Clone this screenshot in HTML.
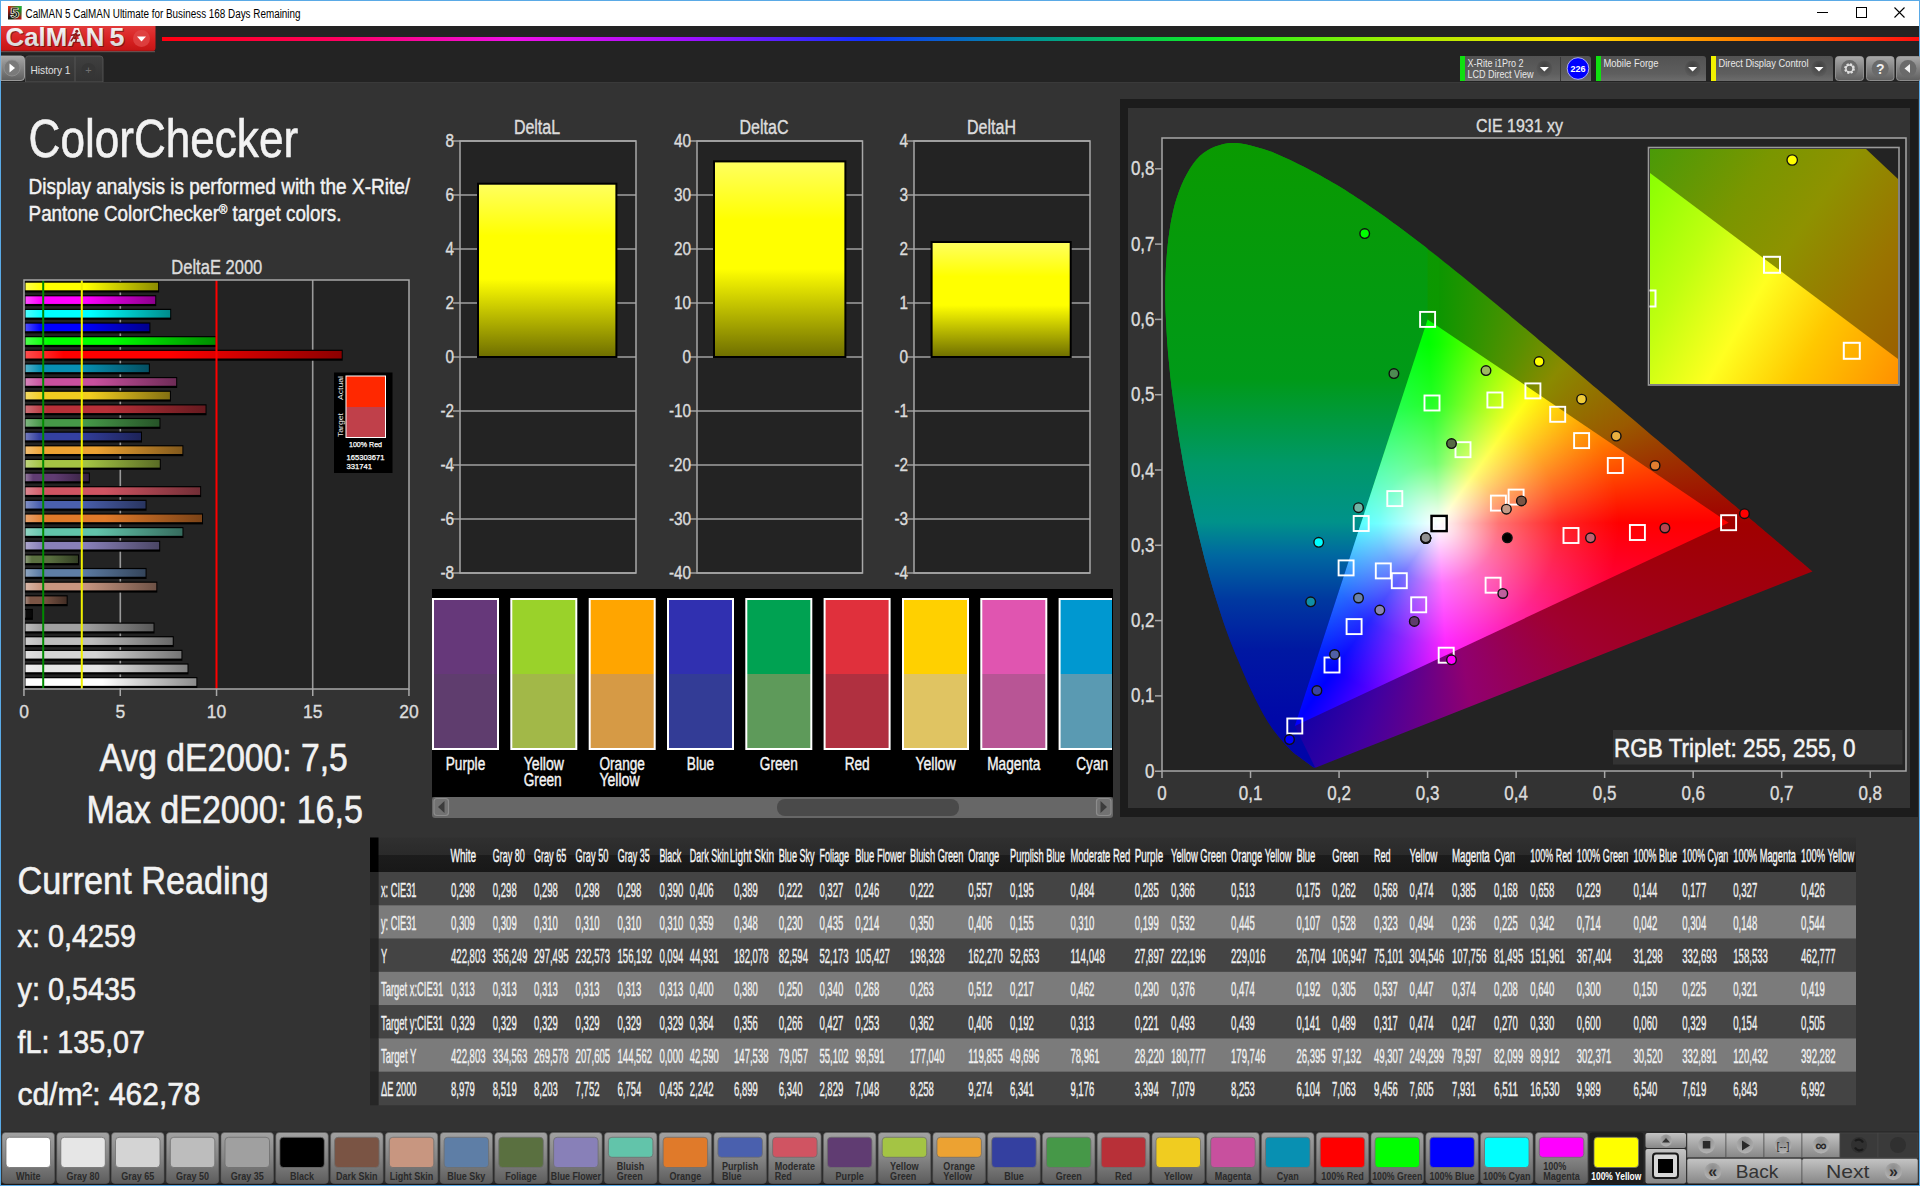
<!DOCTYPE html>
<html><head><meta charset="utf-8"><title>CalMAN ColorChecker</title>
<style>
html,body{margin:0;padding:0;width:1920px;height:1186px;overflow:hidden;background:#333;}
body{position:relative;font-family:"Liberation Sans", sans-serif;}
svg{position:absolute;left:0;top:0;}
svg text{font-family:"Liberation Sans", sans-serif;}
</style></head><body>
<svg width="1920" height="1186" viewBox="0 0 1920 1186">
<rect x="0" y="0" width="1920" height="1186" fill="#5aaae6"/>
<rect x="1" y="1" width="1918" height="25" fill="#ffffff"/>
<defs><linearGradient id="icg" x1="0" y1="0" x2="1" y2="1"><stop offset="0" stop-color="#e03020"/><stop offset="0.5" stop-color="#202020"/><stop offset="1" stop-color="#c02020"/></linearGradient></defs>
<defs><linearGradient id="icr" x1="0" y1="0" x2="1" y2="1"><stop offset="0" stop-color="#ff3010"/><stop offset="0.45" stop-color="#301010"/><stop offset="0.6" stop-color="#103010"/><stop offset="1" stop-color="#e01020"/></linearGradient><linearGradient id="icg2" x1="1" y1="0" x2="0" y2="1"><stop offset="0" stop-color="#20e040" stop-opacity="0.9"/><stop offset="0.5" stop-color="#20e040" stop-opacity="0"/></linearGradient></defs>
<rect x="8" y="6" width="13.5" height="13.5" fill="url(#icr)"/>
<rect x="8" y="6" width="13.5" height="13.5" fill="url(#icg2)"/>
<text x="10.3" y="18" font-size="14" font-weight="bold" fill="#000" stroke="#f0f0e0" stroke-width="0.7" textLength="9" lengthAdjust="spacingAndGlyphs">5</text>
<text x="25.50" y="17.50" font-size="12.00" fill="#000" textLength="275.00" lengthAdjust="spacingAndGlyphs" >CalMAN 5 CalMAN Ultimate for Business 168 Days Remaining</text>
<rect x="1817" y="12" width="11" height="1" fill="#000"/>
<rect x="1856.5" y="7.5" width="10" height="10" fill="none" stroke="#000" stroke-width="1"/>
<path d="M1894.5 7.5 L1904.5 17.5 M1904.5 7.5 L1894.5 17.5" stroke="#000" stroke-width="1.1"/>
<rect x="1" y="26" width="1918" height="56" fill="#232323"/>
<defs><linearGradient id="logog" x1="0" y1="0" x2="0" y2="1"><stop offset="0" stop-color="#e23a3a"/><stop offset="0.5" stop-color="#d82222"/><stop offset="1" stop-color="#c41414"/></linearGradient><linearGradient id="logot" x1="0" y1="0" x2="0" y2="1"><stop offset="0" stop-color="#ffffff"/><stop offset="1" stop-color="#cfcfcf"/></linearGradient></defs>
<path d="M1 26 H155.5 V47.5 Q155.5 51.5 151.5 51.5 H1 Z" fill="url(#logog)"/>
<rect x="1" y="50.5" width="154" height="1.2" fill="#7a1010" opacity="0.6"/>
<text x="6.50" y="46.50" font-size="26.50" fill="#3a0a0a" textLength="99.00" lengthAdjust="spacingAndGlyphs" font-weight="bold" opacity="0.5">CalMAN</text>
<text x="5.50" y="45.50" font-size="26.50" fill="url(#logot)" textLength="99.00" lengthAdjust="spacingAndGlyphs" font-weight="bold" >CalMAN</text>
<text x="110.50" y="46.50" font-size="26.50" fill="#3a0a0a" textLength="15.00" lengthAdjust="spacingAndGlyphs" font-weight="bold" opacity="0.5">5</text>
<text x="109.50" y="45.50" font-size="26.50" fill="url(#logot)" textLength="15.00" lengthAdjust="spacingAndGlyphs" font-weight="bold" >5</text>
<g fill="none" stroke="#901818" stroke-width="1.6" stroke-linecap="round" stroke-linejoin="round"><circle cx="76.8" cy="31.2" r="1.5" fill="#901818" stroke="none"/><path d="M75.5 33.5 L73.5 37.5 M75 34.3 L77.8 35.8 L79.5 34.8 M74.6 34.5 L71.6 35.2 M73.5 37.5 L76.3 39.2 L75.8 41.8 M73.5 37.5 L71.2 40.8"/></g>
<rect x="1" y="51.2" width="154" height="1" fill="#6a6a6a" opacity="0.8"/>
<circle cx="141.5" cy="38.5" r="8.5" fill="#e04646" opacity="0.8"/>
<path d="M137 36.5 H146 L141.5 41.5 Z" fill="#fff"/>
<defs><linearGradient id="rainbow" x1="0" y1="0" x2="1" y2="0"><stop offset="0" stop-color="#ff0010"/><stop offset="0.1" stop-color="#ff0060"/><stop offset="0.2" stop-color="#f010e8"/><stop offset="0.3" stop-color="#a010ff"/><stop offset="0.4" stop-color="#1030ff"/><stop offset="0.5" stop-color="#009a90"/><stop offset="0.6" stop-color="#10f020"/><stop offset="0.7" stop-color="#a0f000"/><stop offset="0.8" stop-color="#ffe000"/><stop offset="0.9" stop-color="#ff8000"/><stop offset="1" stop-color="#ff1010"/></linearGradient></defs>
<rect x="162" y="37" width="1757" height="4" fill="url(#rainbow)"/>
<defs><linearGradient id="btng" x1="0" y1="0" x2="0" y2="1"><stop offset="0" stop-color="#a8a8a8"/><stop offset="1" stop-color="#5e5e5e"/></linearGradient><linearGradient id="tabg" x1="0" y1="0" x2="0" y2="1"><stop offset="0" stop-color="#404040"/><stop offset="1" stop-color="#333333"/></linearGradient><linearGradient id="devg" x1="0" y1="0" x2="0" y2="1"><stop offset="0" stop-color="#525252"/><stop offset="0.7" stop-color="#5e5e5e"/><stop offset="1" stop-color="#6c6c6c"/></linearGradient><radialGradient id="ddg" cx="0.5" cy="0.35" r="0.6"><stop offset="0" stop-color="#3e3e3e"/><stop offset="1" stop-color="#5a5a5a"/></radialGradient></defs>
<path d="M1 56 H21 Q24.5 56 24.5 59.5 V77 Q24.5 80.5 21 80.5 H1 Z" fill="url(#btng)" stroke="#b0b0b0" stroke-width="0.8"/>
<circle cx="12" cy="68" r="8" fill="#7a7a7a" stroke="#909090" stroke-width="0.8"/>
<path d="M9.5 63.5 L15 68 L9.5 72.5 Z" fill="#fff"/>
<path d="M25.5 82 V59 Q25.5 56 28.5 56 H100 Q103 56 103 59 V82 Z" fill="url(#tabg)" stroke="#5a5a5a" stroke-width="0.8"/>
<rect x="74.5" y="56.5" width="1" height="25" fill="#555"/>
<text x="30.50" y="73.50" font-size="11.00" fill="#e0e0e0" textLength="40.00" lengthAdjust="spacingAndGlyphs" >History 1</text>
<circle cx="88.5" cy="70" r="7" fill="#363636"/>
<text x="88.50" y="74.00" font-size="11.00" fill="#707070" text-anchor="middle" >+</text>
<path d="M1460.0 56 H1588.0 Q1591.0 56 1591.0 59 V81 H1460.0 Z" fill="url(#devg)"/><rect x="1460.0" y="56" width="5" height="25" fill="#10e010"/><text x="1467.50" y="66.50" font-size="10.50" fill="#e8e8e8" textLength="56.00" lengthAdjust="spacingAndGlyphs" >X-Rite i1Pro 2</text><text x="1467.50" y="78.00" font-size="10.50" fill="#e8e8e8" textLength="66.00" lengthAdjust="spacingAndGlyphs" >LCD Direct View</text><circle cx="1544.4" cy="68.5" r="8" fill="url(#ddg)"/><path d="M1539.9 67 H1548.9 L1544.4 71.5 Z" fill="#fff"/>
<rect x="1560" y="57" width="1" height="24" fill="#3a3a3a"/>
<circle cx="1578" cy="68.5" r="10.8" fill="#0000ff" stroke="#d0d0ff" stroke-width="0.8"/>
<text x="1578.00" y="72.00" font-size="9.00" fill="#fff" text-anchor="middle" font-weight="bold" >226</text>
<path d="M1596.0 56 H1703.0 Q1706.0 56 1706.0 59 V81 H1596.0 Z" fill="url(#devg)"/><rect x="1596.0" y="56" width="5" height="25" fill="#10e010"/><text x="1603.50" y="66.50" font-size="10.50" fill="#e8e8e8" textLength="55.00" lengthAdjust="spacingAndGlyphs" >Mobile Forge</text><circle cx="1692.6" cy="68.5" r="8" fill="url(#ddg)"/><path d="M1688.1 67 H1697.1 L1692.6 71.5 Z" fill="#fff"/>
<path d="M1711.0 56 H1830.0 Q1833.0 56 1833.0 59 V81 H1711.0 Z" fill="url(#devg)"/><rect x="1711.0" y="56" width="5" height="25" fill="#f0f000"/><text x="1718.50" y="66.50" font-size="10.50" fill="#e8e8e8" textLength="90.00" lengthAdjust="spacingAndGlyphs" >Direct Display Control</text><circle cx="1819.0" cy="68.5" r="8" fill="url(#ddg)"/><path d="M1814.5 67 H1823.5 L1819.0 71.5 Z" fill="#fff"/>
<rect x="1835.5" y="56.5" width="28.0" height="24" rx="3" fill="url(#btng)" stroke="#a0a0a0" stroke-width="0.8"/>
<circle cx="1849.5" cy="68.5" r="8.5" fill="#6a6a6a"/>
<circle cx="1849.5" cy="68.5" r="4.2" fill="none" stroke="#e0e0e0" stroke-width="2.4" stroke-dasharray="2 1.3"/>
<circle cx="1849.5" cy="68.5" r="3.6" fill="none" stroke="#e0e0e0" stroke-width="1.5"/>
<rect x="1866.5" y="56.5" width="27.5" height="24" rx="3" fill="url(#btng)" stroke="#a0a0a0" stroke-width="0.8"/>
<circle cx="1880.2" cy="68.5" r="8.5" fill="#6a6a6a"/>
<text x="1880.25" y="74.00" font-size="14.00" fill="#f0f0f0" text-anchor="middle" font-weight="bold" >?</text>
<rect x="1896.5" y="56.5" width="25.0" height="24" rx="3" fill="url(#btng)" stroke="#a0a0a0" stroke-width="0.8"/>
<circle cx="1908.0" cy="68.5" r="8.5" fill="#6a6a6a"/>
<path d="M1904.5 68.5 L1910.0 64 V73 Z" fill="#f0f0f0"/>
<rect x="1" y="82" width="1918" height="1050" fill="#333333"/>
<rect x="1" y="82" width="1918" height="1" fill="#3a3a3a"/>
<defs><linearGradient id="bg0" x1="0" y1="0" x2="1" y2="0"><stop offset="0" stop-color="#ffff4c"/><stop offset="0.12" stop-color="#ffff00"/><stop offset="0.45" stop-color="#ffff00"/><stop offset="1" stop-color="#8c8c00"/></linearGradient><linearGradient id="bg1" x1="0" y1="0" x2="1" y2="0"><stop offset="0" stop-color="#ff4cff"/><stop offset="0.12" stop-color="#ff00ff"/><stop offset="0.45" stop-color="#ff00ff"/><stop offset="1" stop-color="#8c008c"/></linearGradient><linearGradient id="bg2" x1="0" y1="0" x2="1" y2="0"><stop offset="0" stop-color="#4cffff"/><stop offset="0.12" stop-color="#00ffff"/><stop offset="0.45" stop-color="#00ffff"/><stop offset="1" stop-color="#008c8c"/></linearGradient><linearGradient id="bg3" x1="0" y1="0" x2="1" y2="0"><stop offset="0" stop-color="#4c4cff"/><stop offset="0.12" stop-color="#0000ff"/><stop offset="0.45" stop-color="#0000ff"/><stop offset="1" stop-color="#00008c"/></linearGradient><linearGradient id="bg4" x1="0" y1="0" x2="1" y2="0"><stop offset="0" stop-color="#4cff4c"/><stop offset="0.12" stop-color="#00ff00"/><stop offset="0.45" stop-color="#00ff00"/><stop offset="1" stop-color="#008c00"/></linearGradient><linearGradient id="bg5" x1="0" y1="0" x2="1" y2="0"><stop offset="0" stop-color="#ff4c4c"/><stop offset="0.12" stop-color="#ff0000"/><stop offset="0.45" stop-color="#ff0000"/><stop offset="1" stop-color="#8c0000"/></linearGradient><linearGradient id="bg6" x1="0" y1="0" x2="1" y2="0"><stop offset="0" stop-color="#52b1c9"/><stop offset="0.12" stop-color="#0890b2"/><stop offset="0.45" stop-color="#0890b2"/><stop offset="1" stop-color="#044f62"/></linearGradient><linearGradient id="bg7" x1="0" y1="0" x2="1" y2="0"><stop offset="0" stop-color="#d884bb"/><stop offset="0.12" stop-color="#c8509e"/><stop offset="0.45" stop-color="#c8509e"/><stop offset="1" stop-color="#6e2c57"/></linearGradient><linearGradient id="bg8" x1="0" y1="0" x2="1" y2="0"><stop offset="0" stop-color="#f4db63"/><stop offset="0.12" stop-color="#f0cc20"/><stop offset="0.45" stop-color="#f0cc20"/><stop offset="1" stop-color="#847012"/></linearGradient><linearGradient id="bg9" x1="0" y1="0" x2="1" y2="0"><stop offset="0" stop-color="#cd6e74"/><stop offset="0.12" stop-color="#b83038"/><stop offset="0.45" stop-color="#b83038"/><stop offset="1" stop-color="#651a1f"/></linearGradient><linearGradient id="bg10" x1="0" y1="0" x2="1" y2="0"><stop offset="0" stop-color="#7eb77f"/><stop offset="0.12" stop-color="#469848"/><stop offset="0.45" stop-color="#469848"/><stop offset="1" stop-color="#265428"/></linearGradient><linearGradient id="bg11" x1="0" y1="0" x2="1" y2="0"><stop offset="0" stop-color="#7179bc"/><stop offset="0.12" stop-color="#3440a0"/><stop offset="0.45" stop-color="#3440a0"/><stop offset="1" stop-color="#1d2358"/></linearGradient><linearGradient id="bg12" x1="0" y1="0" x2="1" y2="0"><stop offset="0" stop-color="#f2be70"/><stop offset="0.12" stop-color="#eca232"/><stop offset="0.45" stop-color="#eca232"/><stop offset="1" stop-color="#82591c"/></linearGradient><linearGradient id="bg13" x1="0" y1="0" x2="1" y2="0"><stop offset="0" stop-color="#bfd67c"/><stop offset="0.12" stop-color="#a4c444"/><stop offset="0.45" stop-color="#a4c444"/><stop offset="1" stop-color="#5a6c25"/></linearGradient><linearGradient id="bg14" x1="0" y1="0" x2="1" y2="0"><stop offset="0" stop-color="#90769c"/><stop offset="0.12" stop-color="#603c72"/><stop offset="0.45" stop-color="#603c72"/><stop offset="1" stop-color="#35213f"/></linearGradient><linearGradient id="bg15" x1="0" y1="0" x2="1" y2="0"><stop offset="0" stop-color="#de8791"/><stop offset="0.12" stop-color="#d05462"/><stop offset="0.45" stop-color="#d05462"/><stop offset="1" stop-color="#722e36"/></linearGradient><linearGradient id="bg16" x1="0" y1="0" x2="1" y2="0"><stop offset="0" stop-color="#8090c6"/><stop offset="0.12" stop-color="#4a60ae"/><stop offset="0.45" stop-color="#4a60ae"/><stop offset="1" stop-color="#293560"/></linearGradient><linearGradient id="bg17" x1="0" y1="0" x2="1" y2="0"><stop offset="0" stop-color="#e9a26a"/><stop offset="0.12" stop-color="#e07a2a"/><stop offset="0.45" stop-color="#e07a2a"/><stop offset="1" stop-color="#7b4317"/></linearGradient><linearGradient id="bg18" x1="0" y1="0" x2="1" y2="0"><stop offset="0" stop-color="#91d6c4"/><stop offset="0.12" stop-color="#62c4aa"/><stop offset="0.45" stop-color="#62c4aa"/><stop offset="1" stop-color="#366c5e"/></linearGradient><linearGradient id="bg19" x1="0" y1="0" x2="1" y2="0"><stop offset="0" stop-color="#aca6cd"/><stop offset="0.12" stop-color="#8880b8"/><stop offset="0.45" stop-color="#8880b8"/><stop offset="1" stop-color="#4b4665"/></linearGradient><linearGradient id="bg20" x1="0" y1="0" x2="1" y2="0"><stop offset="0" stop-color="#8c9b79"/><stop offset="0.12" stop-color="#5a7040"/><stop offset="0.45" stop-color="#5a7040"/><stop offset="1" stop-color="#323e23"/></linearGradient><linearGradient id="bg21" x1="0" y1="0" x2="1" y2="0"><stop offset="0" stop-color="#8ea5c1"/><stop offset="0.12" stop-color="#5e7ea6"/><stop offset="0.45" stop-color="#5e7ea6"/><stop offset="1" stop-color="#34455b"/></linearGradient><linearGradient id="bg22" x1="0" y1="0" x2="1" y2="0"><stop offset="0" stop-color="#d8b6a6"/><stop offset="0.12" stop-color="#c89680"/><stop offset="0.45" stop-color="#c89680"/><stop offset="1" stop-color="#6e5246"/></linearGradient><linearGradient id="bg23" x1="0" y1="0" x2="1" y2="0"><stop offset="0" stop-color="#a2877c"/><stop offset="0.12" stop-color="#7a5444"/><stop offset="0.45" stop-color="#7a5444"/><stop offset="1" stop-color="#432e25"/></linearGradient><linearGradient id="bg24" x1="0" y1="0" x2="1" y2="0"><stop offset="0" stop-color="#545454"/><stop offset="0.12" stop-color="#0a0a0a"/><stop offset="0.45" stop-color="#0a0a0a"/><stop offset="1" stop-color="#060606"/></linearGradient><linearGradient id="bg25" x1="0" y1="0" x2="1" y2="0"><stop offset="0" stop-color="#bcbcbc"/><stop offset="0.12" stop-color="#a0a0a0"/><stop offset="0.45" stop-color="#a0a0a0"/><stop offset="1" stop-color="#585858"/></linearGradient><linearGradient id="bg26" x1="0" y1="0" x2="1" y2="0"><stop offset="0" stop-color="#d1d1d1"/><stop offset="0.12" stop-color="#bdbdbd"/><stop offset="0.45" stop-color="#bdbdbd"/><stop offset="1" stop-color="#686868"/></linearGradient><linearGradient id="bg27" x1="0" y1="0" x2="1" y2="0"><stop offset="0" stop-color="#e1e1e1"/><stop offset="0.12" stop-color="#d4d4d4"/><stop offset="0.45" stop-color="#d4d4d4"/><stop offset="1" stop-color="#757575"/></linearGradient><linearGradient id="bg28" x1="0" y1="0" x2="1" y2="0"><stop offset="0" stop-color="#eeeeee"/><stop offset="0.12" stop-color="#e6e6e6"/><stop offset="0.45" stop-color="#e6e6e6"/><stop offset="1" stop-color="#7f7f7f"/></linearGradient><linearGradient id="bg29" x1="0" y1="0" x2="1" y2="0"><stop offset="0" stop-color="#ffffff"/><stop offset="0.12" stop-color="#ffffff"/><stop offset="0.45" stop-color="#ffffff"/><stop offset="1" stop-color="#8c8c8c"/></linearGradient></defs>
<text x="28.60" y="156.80" font-size="53.00" fill="#f2f2f2" textLength="269.50" lengthAdjust="spacingAndGlyphs" stroke="#f2f2f2" stroke-width="0.6">ColorChecker</text>
<text x="28.60" y="193.50" font-size="21.50" fill="#f2f2f2" textLength="381.50" lengthAdjust="spacingAndGlyphs" stroke="#f2f2f2" stroke-width="0.45">Display analysis is performed with the X-Rite/</text>
<text x="28.6" y="221" font-size="21.5" fill="#f2f2f2" stroke="#f2f2f2" stroke-width="0.45" textLength="312.8" lengthAdjust="spacingAndGlyphs">Pantone ColorChecker<tspan font-size="13" dy="-7">®</tspan><tspan dy="7"> target colors.</tspan></text>
<text x="216.80" y="273.70" font-size="19.50" fill="#dcdcdc" text-anchor="middle" textLength="91.00" lengthAdjust="spacingAndGlyphs" stroke="#dcdcdc" stroke-width="0.4">DeltaE 2000</text>
<rect x="24" y="280" width="385" height="409" fill="#232323"/>
<rect x="119.5" y="280" width="1.6" height="409" fill="#9a9a9a"/>
<rect x="311.9" y="280" width="1.6" height="409" fill="#9a9a9a"/>
<rect x="24.5" y="281.50" width="134.60" height="11" fill="#000"/>
<rect x="25.5" y="282.70" width="132.60" height="7.6" fill="url(#bg0)"/>
<rect x="24.5" y="295.14" width="131.73" height="11" fill="#000"/>
<rect x="25.5" y="296.34" width="129.73" height="7.6" fill="url(#bg1)"/>
<rect x="24.5" y="308.78" width="146.67" height="11" fill="#000"/>
<rect x="25.5" y="309.98" width="144.67" height="7.6" fill="url(#bg2)"/>
<rect x="24.5" y="322.42" width="125.89" height="11" fill="#000"/>
<rect x="25.5" y="323.62" width="123.89" height="7.6" fill="url(#bg3)"/>
<rect x="24.5" y="336.06" width="192.29" height="11" fill="#000"/>
<rect x="25.5" y="337.26" width="190.29" height="7.6" fill="url(#bg4)"/>
<rect x="24.5" y="349.70" width="318.20" height="11" fill="#000"/>
<rect x="25.5" y="350.90" width="316.20" height="7.6" fill="url(#bg5)"/>
<rect x="24.5" y="363.34" width="125.34" height="11" fill="#000"/>
<rect x="25.5" y="364.54" width="123.34" height="7.6" fill="url(#bg6)"/>
<rect x="24.5" y="376.98" width="152.67" height="11" fill="#000"/>
<rect x="25.5" y="378.18" width="150.67" height="7.6" fill="url(#bg7)"/>
<rect x="24.5" y="390.62" width="146.40" height="11" fill="#000"/>
<rect x="25.5" y="391.82" width="144.40" height="7.6" fill="url(#bg8)"/>
<rect x="24.5" y="404.26" width="182.03" height="11" fill="#000"/>
<rect x="25.5" y="405.46" width="180.03" height="7.6" fill="url(#bg9)"/>
<rect x="24.5" y="417.90" width="135.96" height="11" fill="#000"/>
<rect x="25.5" y="419.10" width="133.96" height="7.6" fill="url(#bg10)"/>
<rect x="24.5" y="431.54" width="117.50" height="11" fill="#000"/>
<rect x="25.5" y="432.74" width="115.50" height="7.6" fill="url(#bg11)"/>
<rect x="24.5" y="445.18" width="158.87" height="11" fill="#000"/>
<rect x="25.5" y="446.38" width="156.87" height="7.6" fill="url(#bg12)"/>
<rect x="24.5" y="458.82" width="136.27" height="11" fill="#000"/>
<rect x="25.5" y="460.02" width="134.27" height="7.6" fill="url(#bg13)"/>
<rect x="24.5" y="472.46" width="65.33" height="11" fill="#000"/>
<rect x="25.5" y="473.66" width="63.33" height="7.6" fill="url(#bg14)"/>
<rect x="24.5" y="486.10" width="176.64" height="11" fill="#000"/>
<rect x="25.5" y="487.30" width="174.64" height="7.6" fill="url(#bg15)"/>
<rect x="24.5" y="499.74" width="122.06" height="11" fill="#000"/>
<rect x="25.5" y="500.94" width="120.06" height="7.6" fill="url(#bg16)"/>
<rect x="24.5" y="513.38" width="178.52" height="11" fill="#000"/>
<rect x="25.5" y="514.58" width="176.52" height="7.6" fill="url(#bg17)"/>
<rect x="24.5" y="527.02" width="158.97" height="11" fill="#000"/>
<rect x="25.5" y="528.22" width="156.97" height="7.6" fill="url(#bg18)"/>
<rect x="24.5" y="540.66" width="135.67" height="11" fill="#000"/>
<rect x="25.5" y="541.86" width="133.67" height="7.6" fill="url(#bg19)"/>
<rect x="24.5" y="554.30" width="54.46" height="11" fill="#000"/>
<rect x="25.5" y="555.50" width="52.46" height="7.6" fill="url(#bg20)"/>
<rect x="24.5" y="567.94" width="122.05" height="11" fill="#000"/>
<rect x="25.5" y="569.14" width="120.05" height="7.6" fill="url(#bg21)"/>
<rect x="24.5" y="581.58" width="132.81" height="11" fill="#000"/>
<rect x="25.5" y="582.78" width="130.81" height="7.6" fill="url(#bg22)"/>
<rect x="24.5" y="595.22" width="43.16" height="11" fill="#000"/>
<rect x="25.5" y="596.42" width="41.16" height="7.6" fill="url(#bg23)"/>
<rect x="24.5" y="608.86" width="8.37" height="11" fill="#000"/>
<rect x="25.5" y="610.06" width="6.37" height="7.6" fill="url(#bg24)"/>
<rect x="24.5" y="622.50" width="130.01" height="11" fill="#000"/>
<rect x="25.5" y="623.70" width="128.01" height="7.6" fill="url(#bg25)"/>
<rect x="24.5" y="636.14" width="149.23" height="11" fill="#000"/>
<rect x="25.5" y="637.34" width="147.23" height="7.6" fill="url(#bg26)"/>
<rect x="24.5" y="649.78" width="157.91" height="11" fill="#000"/>
<rect x="25.5" y="650.98" width="155.91" height="7.6" fill="url(#bg27)"/>
<rect x="24.5" y="663.42" width="163.99" height="11" fill="#000"/>
<rect x="25.5" y="664.62" width="161.99" height="7.6" fill="url(#bg28)"/>
<rect x="24.5" y="677.06" width="172.85" height="11" fill="#000"/>
<rect x="25.5" y="678.26" width="170.85" height="7.6" fill="url(#bg29)"/>
<rect x="42.2" y="280" width="2" height="409" fill="#008a00"/>
<rect x="80.8" y="280" width="2" height="409" fill="#f0f000"/>
<rect x="215.5" y="280" width="2" height="409" fill="#ff0000"/>
<rect x="24.0" y="280.0" width="385" height="409" fill="none" stroke="#a8a8a8" stroke-width="1.5"/>
<rect x="23.2" y="689" width="1.5" height="7" fill="#a8a8a8"/>
<text x="24.00" y="717.50" font-size="19.00" fill="#dcdcdc" text-anchor="middle" textLength="9.72" lengthAdjust="spacingAndGlyphs" stroke="#dcdcdc" stroke-width="0.4">0</text>
<rect x="119.5" y="689" width="1.5" height="7" fill="#a8a8a8"/>
<text x="120.25" y="717.50" font-size="19.00" fill="#dcdcdc" text-anchor="middle" textLength="9.72" lengthAdjust="spacingAndGlyphs" stroke="#dcdcdc" stroke-width="0.4">5</text>
<rect x="215.8" y="689" width="1.5" height="7" fill="#a8a8a8"/>
<text x="216.50" y="717.50" font-size="19.00" fill="#dcdcdc" text-anchor="middle" textLength="19.44" lengthAdjust="spacingAndGlyphs" stroke="#dcdcdc" stroke-width="0.4">10</text>
<rect x="312.0" y="689" width="1.5" height="7" fill="#a8a8a8"/>
<text x="312.75" y="717.50" font-size="19.00" fill="#dcdcdc" text-anchor="middle" textLength="19.44" lengthAdjust="spacingAndGlyphs" stroke="#dcdcdc" stroke-width="0.4">15</text>
<rect x="408.2" y="689" width="1.5" height="7" fill="#a8a8a8"/>
<text x="409.00" y="717.50" font-size="19.00" fill="#dcdcdc" text-anchor="middle" textLength="19.44" lengthAdjust="spacingAndGlyphs" stroke="#dcdcdc" stroke-width="0.4">20</text>
<rect x="334" y="372.5" width="58.5" height="100.5" fill="#000"/>
<rect x="345.5" y="375.5" width="40.5" height="62.5" fill="#fff"/>
<rect x="346.5" y="376.5" width="38.5" height="30.5" fill="#ff2800"/>
<rect x="346.5" y="407" width="38.5" height="30" fill="#c0404a"/>
<text transform="translate(342.5 400) rotate(-90)" font-size="8" fill="#e8e8e8" textLength="24" lengthAdjust="spacingAndGlyphs">Actual</text>
<text transform="translate(342.5 437) rotate(-90)" font-size="8" fill="#e8e8e8" textLength="24" lengthAdjust="spacingAndGlyphs">Target</text>
<text x="365.50" y="447.00" font-size="7.50" fill="#ffffff" text-anchor="middle" textLength="33.00" lengthAdjust="spacingAndGlyphs" stroke="#ffffff" stroke-width="0.25">100% Red</text>
<text x="346.50" y="460.00" font-size="7.50" fill="#ffffff" textLength="38.00" lengthAdjust="spacingAndGlyphs" stroke="#ffffff" stroke-width="0.25">165303671</text>
<text x="346.50" y="468.50" font-size="7.50" fill="#ffffff" textLength="25.50" lengthAdjust="spacingAndGlyphs" stroke="#ffffff" stroke-width="0.25">331741</text>
<text x="99.50" y="770.75" font-size="39.00" fill="#f2f2f2" textLength="248.30" lengthAdjust="spacingAndGlyphs" stroke="#f2f2f2" stroke-width="0.6">Avg dE2000: 7,5</text>
<text x="86.40" y="822.80" font-size="39.00" fill="#f2f2f2" textLength="276.60" lengthAdjust="spacingAndGlyphs" stroke="#f2f2f2" stroke-width="0.6">Max dE2000: 16,5</text>
<text x="17.50" y="893.75" font-size="39.00" fill="#f2f2f2" textLength="251.20" lengthAdjust="spacingAndGlyphs" stroke="#f2f2f2" stroke-width="0.6">Current Reading</text>
<text x="17.50" y="947.00" font-size="32.00" fill="#f2f2f2" textLength="118.50" lengthAdjust="spacingAndGlyphs" stroke="#f2f2f2" stroke-width="0.6">x: 0,4259</text>
<text x="17.50" y="1000.00" font-size="32.00" fill="#f2f2f2" textLength="118.50" lengthAdjust="spacingAndGlyphs" stroke="#f2f2f2" stroke-width="0.6">y: 0,5435</text>
<text x="17.50" y="1052.50" font-size="32.00" fill="#f2f2f2" textLength="127.50" lengthAdjust="spacingAndGlyphs" stroke="#f2f2f2" stroke-width="0.6">fL: 135,07</text>
<text x="17.50" y="1105.00" font-size="32.00" fill="#f2f2f2" textLength="183.00" lengthAdjust="spacingAndGlyphs" stroke="#f2f2f2" stroke-width="0.6">cd/m²: 462,78</text>
<defs><linearGradient id="ybar" x1="0" y1="0" x2="0" y2="1"><stop offset="0" stop-color="#ffff60"/><stop offset="0.3" stop-color="#ffff00"/><stop offset="0.55" stop-color="#ffff00"/><stop offset="1" stop-color="#6e6e00"/></linearGradient></defs>
<text x="537.00" y="134.00" font-size="19.50" fill="#dcdcdc" text-anchor="middle" textLength="46.22" lengthAdjust="spacingAndGlyphs" stroke="#dcdcdc" stroke-width="0.4">DeltaL</text>
<rect x="460.0" y="141" width="176.0" height="432" fill="#232323"/>
<rect x="453.0" y="140.25" width="183.0" height="1.5" fill="#a0a0a0"/>
<text x="454.00" y="147.30" font-size="18.00" fill="#dcdcdc" text-anchor="end" textLength="8.51" lengthAdjust="spacingAndGlyphs" stroke="#dcdcdc" stroke-width="0.4">8</text>
<rect x="453.0" y="194.25" width="183.0" height="1.5" fill="#a0a0a0"/>
<text x="454.00" y="201.30" font-size="18.00" fill="#dcdcdc" text-anchor="end" textLength="8.51" lengthAdjust="spacingAndGlyphs" stroke="#dcdcdc" stroke-width="0.4">6</text>
<rect x="453.0" y="248.25" width="183.0" height="1.5" fill="#a0a0a0"/>
<text x="454.00" y="255.30" font-size="18.00" fill="#dcdcdc" text-anchor="end" textLength="8.51" lengthAdjust="spacingAndGlyphs" stroke="#dcdcdc" stroke-width="0.4">4</text>
<rect x="453.0" y="302.25" width="183.0" height="1.5" fill="#a0a0a0"/>
<text x="454.00" y="309.30" font-size="18.00" fill="#dcdcdc" text-anchor="end" textLength="8.51" lengthAdjust="spacingAndGlyphs" stroke="#dcdcdc" stroke-width="0.4">2</text>
<rect x="453.0" y="356.25" width="183.0" height="1.5" fill="#a0a0a0"/>
<text x="454.00" y="363.30" font-size="18.00" fill="#dcdcdc" text-anchor="end" textLength="8.51" lengthAdjust="spacingAndGlyphs" stroke="#dcdcdc" stroke-width="0.4">0</text>
<rect x="453.0" y="410.25" width="183.0" height="1.5" fill="#a0a0a0"/>
<text x="454.00" y="417.30" font-size="18.00" fill="#dcdcdc" text-anchor="end" textLength="13.60" lengthAdjust="spacingAndGlyphs" stroke="#dcdcdc" stroke-width="0.4">-2</text>
<rect x="453.0" y="464.25" width="183.0" height="1.5" fill="#a0a0a0"/>
<text x="454.00" y="471.30" font-size="18.00" fill="#dcdcdc" text-anchor="end" textLength="13.60" lengthAdjust="spacingAndGlyphs" stroke="#dcdcdc" stroke-width="0.4">-4</text>
<rect x="453.0" y="518.25" width="183.0" height="1.5" fill="#a0a0a0"/>
<text x="454.00" y="525.30" font-size="18.00" fill="#dcdcdc" text-anchor="end" textLength="13.60" lengthAdjust="spacingAndGlyphs" stroke="#dcdcdc" stroke-width="0.4">-6</text>
<rect x="453.0" y="572.25" width="183.0" height="1.5" fill="#a0a0a0"/>
<text x="454.00" y="579.30" font-size="18.00" fill="#dcdcdc" text-anchor="end" textLength="13.60" lengthAdjust="spacingAndGlyphs" stroke="#dcdcdc" stroke-width="0.4">-8</text>
<rect x="478.0" y="183.7" width="138.4" height="173.3" fill="url(#ybar)" stroke="#000" stroke-width="2"/>
<rect x="460.0" y="141" width="176.0" height="432" fill="none" stroke="#a8a8a8" stroke-width="1.5"/>
<text x="764.00" y="134.00" font-size="19.50" fill="#dcdcdc" text-anchor="middle" textLength="48.88" lengthAdjust="spacingAndGlyphs" stroke="#dcdcdc" stroke-width="0.4">DeltaC</text>
<rect x="697.0" y="141" width="165.5" height="432" fill="#232323"/>
<rect x="690.0" y="140.25" width="172.5" height="1.5" fill="#a0a0a0"/>
<text x="691.00" y="147.30" font-size="18.00" fill="#dcdcdc" text-anchor="end" textLength="17.02" lengthAdjust="spacingAndGlyphs" stroke="#dcdcdc" stroke-width="0.4">40</text>
<rect x="690.0" y="194.25" width="172.5" height="1.5" fill="#a0a0a0"/>
<text x="691.00" y="201.30" font-size="18.00" fill="#dcdcdc" text-anchor="end" textLength="17.02" lengthAdjust="spacingAndGlyphs" stroke="#dcdcdc" stroke-width="0.4">30</text>
<rect x="690.0" y="248.25" width="172.5" height="1.5" fill="#a0a0a0"/>
<text x="691.00" y="255.30" font-size="18.00" fill="#dcdcdc" text-anchor="end" textLength="17.02" lengthAdjust="spacingAndGlyphs" stroke="#dcdcdc" stroke-width="0.4">20</text>
<rect x="690.0" y="302.25" width="172.5" height="1.5" fill="#a0a0a0"/>
<text x="691.00" y="309.30" font-size="18.00" fill="#dcdcdc" text-anchor="end" textLength="17.02" lengthAdjust="spacingAndGlyphs" stroke="#dcdcdc" stroke-width="0.4">10</text>
<rect x="690.0" y="356.25" width="172.5" height="1.5" fill="#a0a0a0"/>
<text x="691.00" y="363.30" font-size="18.00" fill="#dcdcdc" text-anchor="end" textLength="8.51" lengthAdjust="spacingAndGlyphs" stroke="#dcdcdc" stroke-width="0.4">0</text>
<rect x="690.0" y="410.25" width="172.5" height="1.5" fill="#a0a0a0"/>
<text x="691.00" y="417.30" font-size="18.00" fill="#dcdcdc" text-anchor="end" textLength="22.11" lengthAdjust="spacingAndGlyphs" stroke="#dcdcdc" stroke-width="0.4">-10</text>
<rect x="690.0" y="464.25" width="172.5" height="1.5" fill="#a0a0a0"/>
<text x="691.00" y="471.30" font-size="18.00" fill="#dcdcdc" text-anchor="end" textLength="22.11" lengthAdjust="spacingAndGlyphs" stroke="#dcdcdc" stroke-width="0.4">-20</text>
<rect x="690.0" y="518.25" width="172.5" height="1.5" fill="#a0a0a0"/>
<text x="691.00" y="525.30" font-size="18.00" fill="#dcdcdc" text-anchor="end" textLength="22.11" lengthAdjust="spacingAndGlyphs" stroke="#dcdcdc" stroke-width="0.4">-30</text>
<rect x="690.0" y="572.25" width="172.5" height="1.5" fill="#a0a0a0"/>
<text x="691.00" y="579.30" font-size="18.00" fill="#dcdcdc" text-anchor="end" textLength="22.11" lengthAdjust="spacingAndGlyphs" stroke="#dcdcdc" stroke-width="0.4">-40</text>
<rect x="714.0" y="161.4" width="131.4" height="195.6" fill="url(#ybar)" stroke="#000" stroke-width="2"/>
<rect x="697.0" y="141" width="165.5" height="432" fill="none" stroke="#a8a8a8" stroke-width="1.5"/>
<text x="991.50" y="134.00" font-size="19.50" fill="#dcdcdc" text-anchor="middle" textLength="48.88" lengthAdjust="spacingAndGlyphs" stroke="#dcdcdc" stroke-width="0.4">DeltaH</text>
<rect x="914.0" y="141" width="176.0" height="432" fill="#232323"/>
<rect x="907.0" y="140.25" width="183.0" height="1.5" fill="#a0a0a0"/>
<text x="908.00" y="147.30" font-size="18.00" fill="#dcdcdc" text-anchor="end" textLength="8.51" lengthAdjust="spacingAndGlyphs" stroke="#dcdcdc" stroke-width="0.4">4</text>
<rect x="907.0" y="194.25" width="183.0" height="1.5" fill="#a0a0a0"/>
<text x="908.00" y="201.30" font-size="18.00" fill="#dcdcdc" text-anchor="end" textLength="8.51" lengthAdjust="spacingAndGlyphs" stroke="#dcdcdc" stroke-width="0.4">3</text>
<rect x="907.0" y="248.25" width="183.0" height="1.5" fill="#a0a0a0"/>
<text x="908.00" y="255.30" font-size="18.00" fill="#dcdcdc" text-anchor="end" textLength="8.51" lengthAdjust="spacingAndGlyphs" stroke="#dcdcdc" stroke-width="0.4">2</text>
<rect x="907.0" y="302.25" width="183.0" height="1.5" fill="#a0a0a0"/>
<text x="908.00" y="309.30" font-size="18.00" fill="#dcdcdc" text-anchor="end" textLength="8.51" lengthAdjust="spacingAndGlyphs" stroke="#dcdcdc" stroke-width="0.4">1</text>
<rect x="907.0" y="356.25" width="183.0" height="1.5" fill="#a0a0a0"/>
<text x="908.00" y="363.30" font-size="18.00" fill="#dcdcdc" text-anchor="end" textLength="8.51" lengthAdjust="spacingAndGlyphs" stroke="#dcdcdc" stroke-width="0.4">0</text>
<rect x="907.0" y="410.25" width="183.0" height="1.5" fill="#a0a0a0"/>
<text x="908.00" y="417.30" font-size="18.00" fill="#dcdcdc" text-anchor="end" textLength="13.60" lengthAdjust="spacingAndGlyphs" stroke="#dcdcdc" stroke-width="0.4">-1</text>
<rect x="907.0" y="464.25" width="183.0" height="1.5" fill="#a0a0a0"/>
<text x="908.00" y="471.30" font-size="18.00" fill="#dcdcdc" text-anchor="end" textLength="13.60" lengthAdjust="spacingAndGlyphs" stroke="#dcdcdc" stroke-width="0.4">-2</text>
<rect x="907.0" y="518.25" width="183.0" height="1.5" fill="#a0a0a0"/>
<text x="908.00" y="525.30" font-size="18.00" fill="#dcdcdc" text-anchor="end" textLength="13.60" lengthAdjust="spacingAndGlyphs" stroke="#dcdcdc" stroke-width="0.4">-3</text>
<rect x="907.0" y="572.25" width="183.0" height="1.5" fill="#a0a0a0"/>
<text x="908.00" y="579.30" font-size="18.00" fill="#dcdcdc" text-anchor="end" textLength="13.60" lengthAdjust="spacingAndGlyphs" stroke="#dcdcdc" stroke-width="0.4">-4</text>
<rect x="931.6" y="242.0" width="139.1" height="115.0" fill="url(#ybar)" stroke="#000" stroke-width="2"/>
<rect x="914.0" y="141" width="176.0" height="432" fill="none" stroke="#a8a8a8" stroke-width="1.5"/>
<rect x="432" y="589" width="681" height="208" fill="#000"/>
<rect x="432.0" y="598" width="67.0" height="152" fill="#fff"/>
<rect x="434.0" y="600" width="63.0" height="74" fill="#66387a"/>
<rect x="434.0" y="674" width="63.0" height="74" fill="#5f3d6e"/>
<text x="465.50" y="769.60" font-size="17.50" fill="#f4f4f4" text-anchor="middle" textLength="39.46" lengthAdjust="spacingAndGlyphs" stroke="#f4f4f4" stroke-width="0.4">Purple</text>
<rect x="510.3" y="598" width="67.0" height="152" fill="#fff"/>
<rect x="512.3" y="600" width="63.0" height="74" fill="#9ad22a"/>
<rect x="512.3" y="674" width="63.0" height="74" fill="#a2b848"/>
<text x="523.72" y="769.60" font-size="17.50" fill="#f4f4f4" textLength="40.21" lengthAdjust="spacingAndGlyphs" stroke="#f4f4f4" stroke-width="0.4">Yellow</text>
<text x="523.72" y="786.30" font-size="17.50" fill="#f4f4f4" textLength="37.94" lengthAdjust="spacingAndGlyphs" stroke="#f4f4f4" stroke-width="0.4">Green</text>
<rect x="588.7" y="598" width="67.0" height="152" fill="#fff"/>
<rect x="590.7" y="600" width="63.0" height="74" fill="#ffa500"/>
<rect x="590.7" y="674" width="63.0" height="74" fill="#d69a45"/>
<text x="599.40" y="769.60" font-size="17.50" fill="#f4f4f4" textLength="45.53" lengthAdjust="spacingAndGlyphs" stroke="#f4f4f4" stroke-width="0.4">Orange</text>
<text x="599.40" y="786.30" font-size="17.50" fill="#f4f4f4" textLength="40.21" lengthAdjust="spacingAndGlyphs" stroke="#f4f4f4" stroke-width="0.4">Yellow</text>
<rect x="667.0" y="598" width="67.0" height="152" fill="#fff"/>
<rect x="669.0" y="600" width="63.0" height="74" fill="#3030b0"/>
<rect x="669.0" y="674" width="63.0" height="74" fill="#333c96"/>
<text x="700.49" y="769.60" font-size="17.50" fill="#f4f4f4" text-anchor="middle" textLength="27.32" lengthAdjust="spacingAndGlyphs" stroke="#f4f4f4" stroke-width="0.4">Blue</text>
<rect x="745.3" y="598" width="67.0" height="152" fill="#fff"/>
<rect x="747.3" y="600" width="63.0" height="74" fill="#00a252"/>
<rect x="747.3" y="674" width="63.0" height="74" fill="#5e9a5a"/>
<text x="778.82" y="769.60" font-size="17.50" fill="#f4f4f4" text-anchor="middle" textLength="37.94" lengthAdjust="spacingAndGlyphs" stroke="#f4f4f4" stroke-width="0.4">Green</text>
<rect x="823.6" y="598" width="67.0" height="152" fill="#fff"/>
<rect x="825.6" y="600" width="63.0" height="74" fill="#e0303c"/>
<rect x="825.6" y="674" width="63.0" height="74" fill="#b03040"/>
<text x="857.15" y="769.60" font-size="17.50" fill="#f4f4f4" text-anchor="middle" textLength="25.04" lengthAdjust="spacingAndGlyphs" stroke="#f4f4f4" stroke-width="0.4">Red</text>
<rect x="902.0" y="598" width="67.0" height="152" fill="#fff"/>
<rect x="904.0" y="600" width="63.0" height="74" fill="#ffd000"/>
<rect x="904.0" y="674" width="63.0" height="74" fill="#e0c462"/>
<text x="935.48" y="769.60" font-size="17.50" fill="#f4f4f4" text-anchor="middle" textLength="40.21" lengthAdjust="spacingAndGlyphs" stroke="#f4f4f4" stroke-width="0.4">Yellow</text>
<rect x="980.3" y="598" width="67.0" height="152" fill="#fff"/>
<rect x="982.3" y="600" width="63.0" height="74" fill="#e055b0"/>
<rect x="982.3" y="674" width="63.0" height="74" fill="#b85595"/>
<text x="1013.81" y="769.60" font-size="17.50" fill="#f4f4f4" text-anchor="middle" textLength="53.12" lengthAdjust="spacingAndGlyphs" stroke="#f4f4f4" stroke-width="0.4">Magenta</text>
<rect x="1058.6" y="598" width="53.4" height="152" fill="#fff"/>
<rect x="1060.6" y="600" width="51.4" height="74" fill="#0098d0"/>
<rect x="1060.6" y="674" width="51.4" height="74" fill="#5a9ab2"/>
<text x="1092.14" y="769.60" font-size="17.50" fill="#f4f4f4" text-anchor="middle" textLength="31.87" lengthAdjust="spacingAndGlyphs" stroke="#f4f4f4" stroke-width="0.4">Cyan</text>
<rect x="432" y="797" width="681" height="21" rx="3" fill="#676767"/>
<rect x="434" y="798.5" width="14.5" height="17" rx="3" fill="#727272" stroke="#8c8c8c" stroke-width="1.2"/>
<path d="M438 807 L444.5 801 V813 Z" fill="#3c3c3c"/>
<rect x="1096.5" y="798.5" width="14.5" height="17" rx="3" fill="#727272" stroke="#8c8c8c" stroke-width="1.2"/>
<path d="M1107 807 L1100.5 801 V813 Z" fill="#3c3c3c"/>
<rect x="777" y="799" width="182" height="17" rx="8" fill="#4a4a4a"/>
<rect x="1120" y="99" width="798" height="718" fill="#1c1c1c"/>
<rect x="1128" y="108" width="782" height="700" fill="#333333"/>
<text x="1519.50" y="131.70" font-size="19.00" fill="#dcdcdc" text-anchor="middle" textLength="87.00" lengthAdjust="spacingAndGlyphs" stroke="#dcdcdc" stroke-width="0.4">CIE 1931 xy</text>
<rect x="1162" y="138" width="744" height="633" fill="#232323"/>
<rect x="1155" y="770.45" width="7" height="1.5" fill="#a8a8a8"/>
<text x="1154.50" y="777.70" font-size="19.50" fill="#dcdcdc" text-anchor="end" textLength="9.44" lengthAdjust="spacingAndGlyphs" stroke="#dcdcdc" stroke-width="0.4">0</text>
<rect x="1161.25" y="771" width="1.5" height="7" fill="#a8a8a8"/>
<text x="1162.00" y="800.00" font-size="19.50" fill="#dcdcdc" text-anchor="middle" textLength="9.44" lengthAdjust="spacingAndGlyphs" stroke="#dcdcdc" stroke-width="0.4">0</text>
<rect x="1155" y="695.15" width="7" height="1.5" fill="#a8a8a8"/>
<text x="1154.50" y="702.40" font-size="19.50" fill="#dcdcdc" text-anchor="end" textLength="23.58" lengthAdjust="spacingAndGlyphs" stroke="#dcdcdc" stroke-width="0.4">0,1</text>
<rect x="1249.78" y="771" width="1.5" height="7" fill="#a8a8a8"/>
<text x="1250.53" y="800.00" font-size="19.50" fill="#dcdcdc" text-anchor="middle" textLength="23.58" lengthAdjust="spacingAndGlyphs" stroke="#dcdcdc" stroke-width="0.4">0,1</text>
<rect x="1155" y="619.85" width="7" height="1.5" fill="#a8a8a8"/>
<text x="1154.50" y="627.10" font-size="19.50" fill="#dcdcdc" text-anchor="end" textLength="23.58" lengthAdjust="spacingAndGlyphs" stroke="#dcdcdc" stroke-width="0.4">0,2</text>
<rect x="1338.31" y="771" width="1.5" height="7" fill="#a8a8a8"/>
<text x="1339.06" y="800.00" font-size="19.50" fill="#dcdcdc" text-anchor="middle" textLength="23.58" lengthAdjust="spacingAndGlyphs" stroke="#dcdcdc" stroke-width="0.4">0,2</text>
<rect x="1155" y="544.55" width="7" height="1.5" fill="#a8a8a8"/>
<text x="1154.50" y="551.80" font-size="19.50" fill="#dcdcdc" text-anchor="end" textLength="23.58" lengthAdjust="spacingAndGlyphs" stroke="#dcdcdc" stroke-width="0.4">0,3</text>
<rect x="1426.84" y="771" width="1.5" height="7" fill="#a8a8a8"/>
<text x="1427.59" y="800.00" font-size="19.50" fill="#dcdcdc" text-anchor="middle" textLength="23.58" lengthAdjust="spacingAndGlyphs" stroke="#dcdcdc" stroke-width="0.4">0,3</text>
<rect x="1155" y="469.25" width="7" height="1.5" fill="#a8a8a8"/>
<text x="1154.50" y="476.50" font-size="19.50" fill="#dcdcdc" text-anchor="end" textLength="23.58" lengthAdjust="spacingAndGlyphs" stroke="#dcdcdc" stroke-width="0.4">0,4</text>
<rect x="1515.37" y="771" width="1.5" height="7" fill="#a8a8a8"/>
<text x="1516.12" y="800.00" font-size="19.50" fill="#dcdcdc" text-anchor="middle" textLength="23.58" lengthAdjust="spacingAndGlyphs" stroke="#dcdcdc" stroke-width="0.4">0,4</text>
<rect x="1155" y="393.95" width="7" height="1.5" fill="#a8a8a8"/>
<text x="1154.50" y="401.20" font-size="19.50" fill="#dcdcdc" text-anchor="end" textLength="23.58" lengthAdjust="spacingAndGlyphs" stroke="#dcdcdc" stroke-width="0.4">0,5</text>
<rect x="1603.90" y="771" width="1.5" height="7" fill="#a8a8a8"/>
<text x="1604.65" y="800.00" font-size="19.50" fill="#dcdcdc" text-anchor="middle" textLength="23.58" lengthAdjust="spacingAndGlyphs" stroke="#dcdcdc" stroke-width="0.4">0,5</text>
<rect x="1155" y="318.65" width="7" height="1.5" fill="#a8a8a8"/>
<text x="1154.50" y="325.90" font-size="19.50" fill="#dcdcdc" text-anchor="end" textLength="23.58" lengthAdjust="spacingAndGlyphs" stroke="#dcdcdc" stroke-width="0.4">0,6</text>
<rect x="1692.43" y="771" width="1.5" height="7" fill="#a8a8a8"/>
<text x="1693.18" y="800.00" font-size="19.50" fill="#dcdcdc" text-anchor="middle" textLength="23.58" lengthAdjust="spacingAndGlyphs" stroke="#dcdcdc" stroke-width="0.4">0,6</text>
<rect x="1155" y="243.35" width="7" height="1.5" fill="#a8a8a8"/>
<text x="1154.50" y="250.60" font-size="19.50" fill="#dcdcdc" text-anchor="end" textLength="23.58" lengthAdjust="spacingAndGlyphs" stroke="#dcdcdc" stroke-width="0.4">0,7</text>
<rect x="1780.96" y="771" width="1.5" height="7" fill="#a8a8a8"/>
<text x="1781.71" y="800.00" font-size="19.50" fill="#dcdcdc" text-anchor="middle" textLength="23.58" lengthAdjust="spacingAndGlyphs" stroke="#dcdcdc" stroke-width="0.4">0,7</text>
<rect x="1155" y="168.05" width="7" height="1.5" fill="#a8a8a8"/>
<text x="1154.50" y="175.30" font-size="19.50" fill="#dcdcdc" text-anchor="end" textLength="23.58" lengthAdjust="spacingAndGlyphs" stroke="#dcdcdc" stroke-width="0.4">0,8</text>
<rect x="1869.49" y="771" width="1.5" height="7" fill="#a8a8a8"/>
<text x="1870.24" y="800.00" font-size="19.50" fill="#dcdcdc" text-anchor="middle" textLength="23.58" lengthAdjust="spacingAndGlyphs" stroke="#dcdcdc" stroke-width="0.4">0,8</text>
<defs><linearGradient id="hdrg" x1="0" y1="0" x2="0" y2="1"><stop offset="0" stop-color="#303030"/><stop offset="0.5" stop-color="#2a2a2a"/><stop offset="0.52" stop-color="#1c1c1c"/><stop offset="1" stop-color="#181818"/></linearGradient></defs>
<rect x="370" y="837.5" width="1486" height="34.5" fill="url(#hdrg)"/>
<rect x="370" y="837.5" width="8.5" height="34.5" fill="#000"/>
<rect x="378.5" y="872.00" width="1477.5" height="33.58" fill="#444444"/>
<rect x="370" y="872.00" width="8.5" height="33.58" fill="#262626"/>
<text x="381.00" y="896.50" font-size="21.00" fill="#f0f0f0" textLength="35.44" lengthAdjust="spacingAndGlyphs" stroke="#f0f0f0" stroke-width="0.4">x: CIE31</text>
<text x="451.00" y="896.50" font-size="21.00" fill="#f0f0f0" textLength="23.91" lengthAdjust="spacingAndGlyphs" stroke="#f0f0f0" stroke-width="0.4">0,298</text>
<text x="492.80" y="896.50" font-size="21.00" fill="#f0f0f0" textLength="23.91" lengthAdjust="spacingAndGlyphs" stroke="#f0f0f0" stroke-width="0.4">0,298</text>
<text x="534.00" y="896.50" font-size="21.00" fill="#f0f0f0" textLength="23.91" lengthAdjust="spacingAndGlyphs" stroke="#f0f0f0" stroke-width="0.4">0,298</text>
<text x="575.60" y="896.50" font-size="21.00" fill="#f0f0f0" textLength="23.91" lengthAdjust="spacingAndGlyphs" stroke="#f0f0f0" stroke-width="0.4">0,298</text>
<text x="617.50" y="896.50" font-size="21.00" fill="#f0f0f0" textLength="23.91" lengthAdjust="spacingAndGlyphs" stroke="#f0f0f0" stroke-width="0.4">0,298</text>
<text x="659.40" y="896.50" font-size="21.00" fill="#f0f0f0" textLength="23.91" lengthAdjust="spacingAndGlyphs" stroke="#f0f0f0" stroke-width="0.4">0,390</text>
<text x="689.70" y="896.50" font-size="21.00" fill="#f0f0f0" textLength="23.91" lengthAdjust="spacingAndGlyphs" stroke="#f0f0f0" stroke-width="0.4">0,406</text>
<text x="734.00" y="896.50" font-size="21.00" fill="#f0f0f0" textLength="23.91" lengthAdjust="spacingAndGlyphs" stroke="#f0f0f0" stroke-width="0.4">0,389</text>
<text x="778.75" y="896.50" font-size="21.00" fill="#f0f0f0" textLength="23.91" lengthAdjust="spacingAndGlyphs" stroke="#f0f0f0" stroke-width="0.4">0,222</text>
<text x="819.40" y="896.50" font-size="21.00" fill="#f0f0f0" textLength="23.91" lengthAdjust="spacingAndGlyphs" stroke="#f0f0f0" stroke-width="0.4">0,327</text>
<text x="855.30" y="896.50" font-size="21.00" fill="#f0f0f0" textLength="23.91" lengthAdjust="spacingAndGlyphs" stroke="#f0f0f0" stroke-width="0.4">0,246</text>
<text x="910.00" y="896.50" font-size="21.00" fill="#f0f0f0" textLength="23.91" lengthAdjust="spacingAndGlyphs" stroke="#f0f0f0" stroke-width="0.4">0,222</text>
<text x="968.30" y="896.50" font-size="21.00" fill="#f0f0f0" textLength="23.91" lengthAdjust="spacingAndGlyphs" stroke="#f0f0f0" stroke-width="0.4">0,557</text>
<text x="1010.00" y="896.50" font-size="21.00" fill="#f0f0f0" textLength="23.91" lengthAdjust="spacingAndGlyphs" stroke="#f0f0f0" stroke-width="0.4">0,195</text>
<text x="1070.40" y="896.50" font-size="21.00" fill="#f0f0f0" textLength="23.91" lengthAdjust="spacingAndGlyphs" stroke="#f0f0f0" stroke-width="0.4">0,484</text>
<text x="1134.80" y="896.50" font-size="21.00" fill="#f0f0f0" textLength="23.91" lengthAdjust="spacingAndGlyphs" stroke="#f0f0f0" stroke-width="0.4">0,285</text>
<text x="1171.00" y="896.50" font-size="21.00" fill="#f0f0f0" textLength="23.91" lengthAdjust="spacingAndGlyphs" stroke="#f0f0f0" stroke-width="0.4">0,366</text>
<text x="1231.00" y="896.50" font-size="21.00" fill="#f0f0f0" textLength="23.91" lengthAdjust="spacingAndGlyphs" stroke="#f0f0f0" stroke-width="0.4">0,513</text>
<text x="1296.40" y="896.50" font-size="21.00" fill="#f0f0f0" textLength="23.91" lengthAdjust="spacingAndGlyphs" stroke="#f0f0f0" stroke-width="0.4">0,175</text>
<text x="1332.00" y="896.50" font-size="21.00" fill="#f0f0f0" textLength="23.91" lengthAdjust="spacingAndGlyphs" stroke="#f0f0f0" stroke-width="0.4">0,262</text>
<text x="1374.00" y="896.50" font-size="21.00" fill="#f0f0f0" textLength="23.91" lengthAdjust="spacingAndGlyphs" stroke="#f0f0f0" stroke-width="0.4">0,568</text>
<text x="1409.60" y="896.50" font-size="21.00" fill="#f0f0f0" textLength="23.91" lengthAdjust="spacingAndGlyphs" stroke="#f0f0f0" stroke-width="0.4">0,474</text>
<text x="1452.00" y="896.50" font-size="21.00" fill="#f0f0f0" textLength="23.91" lengthAdjust="spacingAndGlyphs" stroke="#f0f0f0" stroke-width="0.4">0,385</text>
<text x="1494.00" y="896.50" font-size="21.00" fill="#f0f0f0" textLength="23.91" lengthAdjust="spacingAndGlyphs" stroke="#f0f0f0" stroke-width="0.4">0,168</text>
<text x="1530.30" y="896.50" font-size="21.00" fill="#f0f0f0" textLength="23.91" lengthAdjust="spacingAndGlyphs" stroke="#f0f0f0" stroke-width="0.4">0,658</text>
<text x="1576.80" y="896.50" font-size="21.00" fill="#f0f0f0" textLength="23.91" lengthAdjust="spacingAndGlyphs" stroke="#f0f0f0" stroke-width="0.4">0,229</text>
<text x="1633.40" y="896.50" font-size="21.00" fill="#f0f0f0" textLength="23.91" lengthAdjust="spacingAndGlyphs" stroke="#f0f0f0" stroke-width="0.4">0,144</text>
<text x="1682.30" y="896.50" font-size="21.00" fill="#f0f0f0" textLength="23.91" lengthAdjust="spacingAndGlyphs" stroke="#f0f0f0" stroke-width="0.4">0,177</text>
<text x="1733.30" y="896.50" font-size="21.00" fill="#f0f0f0" textLength="23.91" lengthAdjust="spacingAndGlyphs" stroke="#f0f0f0" stroke-width="0.4">0,327</text>
<text x="1801.00" y="896.50" font-size="21.00" fill="#f0f0f0" textLength="23.91" lengthAdjust="spacingAndGlyphs" stroke="#f0f0f0" stroke-width="0.4">0,426</text>
<rect x="378.5" y="905.28" width="1477.5" height="33.58" fill="#7b7b7b"/>
<rect x="370" y="905.28" width="8.5" height="33.58" fill="#2e2e2e"/>
<text x="381.00" y="929.78" font-size="21.00" fill="#f0f0f0" textLength="35.44" lengthAdjust="spacingAndGlyphs" stroke="#f0f0f0" stroke-width="0.4">y: CIE31</text>
<text x="451.00" y="929.78" font-size="21.00" fill="#f0f0f0" textLength="23.91" lengthAdjust="spacingAndGlyphs" stroke="#f0f0f0" stroke-width="0.4">0,309</text>
<text x="492.80" y="929.78" font-size="21.00" fill="#f0f0f0" textLength="23.91" lengthAdjust="spacingAndGlyphs" stroke="#f0f0f0" stroke-width="0.4">0,309</text>
<text x="534.00" y="929.78" font-size="21.00" fill="#f0f0f0" textLength="23.91" lengthAdjust="spacingAndGlyphs" stroke="#f0f0f0" stroke-width="0.4">0,310</text>
<text x="575.60" y="929.78" font-size="21.00" fill="#f0f0f0" textLength="23.91" lengthAdjust="spacingAndGlyphs" stroke="#f0f0f0" stroke-width="0.4">0,310</text>
<text x="617.50" y="929.78" font-size="21.00" fill="#f0f0f0" textLength="23.91" lengthAdjust="spacingAndGlyphs" stroke="#f0f0f0" stroke-width="0.4">0,310</text>
<text x="659.40" y="929.78" font-size="21.00" fill="#f0f0f0" textLength="23.91" lengthAdjust="spacingAndGlyphs" stroke="#f0f0f0" stroke-width="0.4">0,310</text>
<text x="689.70" y="929.78" font-size="21.00" fill="#f0f0f0" textLength="23.91" lengthAdjust="spacingAndGlyphs" stroke="#f0f0f0" stroke-width="0.4">0,359</text>
<text x="734.00" y="929.78" font-size="21.00" fill="#f0f0f0" textLength="23.91" lengthAdjust="spacingAndGlyphs" stroke="#f0f0f0" stroke-width="0.4">0,348</text>
<text x="778.75" y="929.78" font-size="21.00" fill="#f0f0f0" textLength="23.91" lengthAdjust="spacingAndGlyphs" stroke="#f0f0f0" stroke-width="0.4">0,230</text>
<text x="819.40" y="929.78" font-size="21.00" fill="#f0f0f0" textLength="23.91" lengthAdjust="spacingAndGlyphs" stroke="#f0f0f0" stroke-width="0.4">0,435</text>
<text x="855.30" y="929.78" font-size="21.00" fill="#f0f0f0" textLength="23.91" lengthAdjust="spacingAndGlyphs" stroke="#f0f0f0" stroke-width="0.4">0,214</text>
<text x="910.00" y="929.78" font-size="21.00" fill="#f0f0f0" textLength="23.91" lengthAdjust="spacingAndGlyphs" stroke="#f0f0f0" stroke-width="0.4">0,350</text>
<text x="968.30" y="929.78" font-size="21.00" fill="#f0f0f0" textLength="23.91" lengthAdjust="spacingAndGlyphs" stroke="#f0f0f0" stroke-width="0.4">0,406</text>
<text x="1010.00" y="929.78" font-size="21.00" fill="#f0f0f0" textLength="23.91" lengthAdjust="spacingAndGlyphs" stroke="#f0f0f0" stroke-width="0.4">0,155</text>
<text x="1070.40" y="929.78" font-size="21.00" fill="#f0f0f0" textLength="23.91" lengthAdjust="spacingAndGlyphs" stroke="#f0f0f0" stroke-width="0.4">0,310</text>
<text x="1134.80" y="929.78" font-size="21.00" fill="#f0f0f0" textLength="23.91" lengthAdjust="spacingAndGlyphs" stroke="#f0f0f0" stroke-width="0.4">0,199</text>
<text x="1171.00" y="929.78" font-size="21.00" fill="#f0f0f0" textLength="23.91" lengthAdjust="spacingAndGlyphs" stroke="#f0f0f0" stroke-width="0.4">0,532</text>
<text x="1231.00" y="929.78" font-size="21.00" fill="#f0f0f0" textLength="23.91" lengthAdjust="spacingAndGlyphs" stroke="#f0f0f0" stroke-width="0.4">0,445</text>
<text x="1296.40" y="929.78" font-size="21.00" fill="#f0f0f0" textLength="23.91" lengthAdjust="spacingAndGlyphs" stroke="#f0f0f0" stroke-width="0.4">0,107</text>
<text x="1332.00" y="929.78" font-size="21.00" fill="#f0f0f0" textLength="23.91" lengthAdjust="spacingAndGlyphs" stroke="#f0f0f0" stroke-width="0.4">0,528</text>
<text x="1374.00" y="929.78" font-size="21.00" fill="#f0f0f0" textLength="23.91" lengthAdjust="spacingAndGlyphs" stroke="#f0f0f0" stroke-width="0.4">0,323</text>
<text x="1409.60" y="929.78" font-size="21.00" fill="#f0f0f0" textLength="23.91" lengthAdjust="spacingAndGlyphs" stroke="#f0f0f0" stroke-width="0.4">0,494</text>
<text x="1452.00" y="929.78" font-size="21.00" fill="#f0f0f0" textLength="23.91" lengthAdjust="spacingAndGlyphs" stroke="#f0f0f0" stroke-width="0.4">0,236</text>
<text x="1494.00" y="929.78" font-size="21.00" fill="#f0f0f0" textLength="23.91" lengthAdjust="spacingAndGlyphs" stroke="#f0f0f0" stroke-width="0.4">0,225</text>
<text x="1530.30" y="929.78" font-size="21.00" fill="#f0f0f0" textLength="23.91" lengthAdjust="spacingAndGlyphs" stroke="#f0f0f0" stroke-width="0.4">0,342</text>
<text x="1576.80" y="929.78" font-size="21.00" fill="#f0f0f0" textLength="23.91" lengthAdjust="spacingAndGlyphs" stroke="#f0f0f0" stroke-width="0.4">0,714</text>
<text x="1633.40" y="929.78" font-size="21.00" fill="#f0f0f0" textLength="23.91" lengthAdjust="spacingAndGlyphs" stroke="#f0f0f0" stroke-width="0.4">0,042</text>
<text x="1682.30" y="929.78" font-size="21.00" fill="#f0f0f0" textLength="23.91" lengthAdjust="spacingAndGlyphs" stroke="#f0f0f0" stroke-width="0.4">0,304</text>
<text x="1733.30" y="929.78" font-size="21.00" fill="#f0f0f0" textLength="23.91" lengthAdjust="spacingAndGlyphs" stroke="#f0f0f0" stroke-width="0.4">0,148</text>
<text x="1801.00" y="929.78" font-size="21.00" fill="#f0f0f0" textLength="23.91" lengthAdjust="spacingAndGlyphs" stroke="#f0f0f0" stroke-width="0.4">0,544</text>
<rect x="378.5" y="938.56" width="1477.5" height="33.58" fill="#444444"/>
<rect x="370" y="938.56" width="8.5" height="33.58" fill="#262626"/>
<text x="381.00" y="963.06" font-size="21.00" fill="#f0f0f0" textLength="6.16" lengthAdjust="spacingAndGlyphs" stroke="#f0f0f0" stroke-width="0.4">Y</text>
<text x="451.00" y="963.06" font-size="21.00" fill="#f0f0f0" textLength="34.54" lengthAdjust="spacingAndGlyphs" stroke="#f0f0f0" stroke-width="0.4">422,803</text>
<text x="492.80" y="963.06" font-size="21.00" fill="#f0f0f0" textLength="34.54" lengthAdjust="spacingAndGlyphs" stroke="#f0f0f0" stroke-width="0.4">356,249</text>
<text x="534.00" y="963.06" font-size="21.00" fill="#f0f0f0" textLength="34.54" lengthAdjust="spacingAndGlyphs" stroke="#f0f0f0" stroke-width="0.4">297,495</text>
<text x="575.60" y="963.06" font-size="21.00" fill="#f0f0f0" textLength="34.54" lengthAdjust="spacingAndGlyphs" stroke="#f0f0f0" stroke-width="0.4">232,573</text>
<text x="617.50" y="963.06" font-size="21.00" fill="#f0f0f0" textLength="34.54" lengthAdjust="spacingAndGlyphs" stroke="#f0f0f0" stroke-width="0.4">156,192</text>
<text x="659.40" y="963.06" font-size="21.00" fill="#f0f0f0" textLength="23.91" lengthAdjust="spacingAndGlyphs" stroke="#f0f0f0" stroke-width="0.4">0,094</text>
<text x="689.70" y="963.06" font-size="21.00" fill="#f0f0f0" textLength="29.22" lengthAdjust="spacingAndGlyphs" stroke="#f0f0f0" stroke-width="0.4">44,931</text>
<text x="734.00" y="963.06" font-size="21.00" fill="#f0f0f0" textLength="34.54" lengthAdjust="spacingAndGlyphs" stroke="#f0f0f0" stroke-width="0.4">182,078</text>
<text x="778.75" y="963.06" font-size="21.00" fill="#f0f0f0" textLength="29.22" lengthAdjust="spacingAndGlyphs" stroke="#f0f0f0" stroke-width="0.4">82,594</text>
<text x="819.40" y="963.06" font-size="21.00" fill="#f0f0f0" textLength="29.22" lengthAdjust="spacingAndGlyphs" stroke="#f0f0f0" stroke-width="0.4">52,173</text>
<text x="855.30" y="963.06" font-size="21.00" fill="#f0f0f0" textLength="34.54" lengthAdjust="spacingAndGlyphs" stroke="#f0f0f0" stroke-width="0.4">105,427</text>
<text x="910.00" y="963.06" font-size="21.00" fill="#f0f0f0" textLength="34.54" lengthAdjust="spacingAndGlyphs" stroke="#f0f0f0" stroke-width="0.4">198,328</text>
<text x="968.30" y="963.06" font-size="21.00" fill="#f0f0f0" textLength="34.54" lengthAdjust="spacingAndGlyphs" stroke="#f0f0f0" stroke-width="0.4">162,270</text>
<text x="1010.00" y="963.06" font-size="21.00" fill="#f0f0f0" textLength="29.22" lengthAdjust="spacingAndGlyphs" stroke="#f0f0f0" stroke-width="0.4">52,653</text>
<text x="1070.40" y="963.06" font-size="21.00" fill="#f0f0f0" textLength="34.54" lengthAdjust="spacingAndGlyphs" stroke="#f0f0f0" stroke-width="0.4">114,048</text>
<text x="1134.80" y="963.06" font-size="21.00" fill="#f0f0f0" textLength="29.22" lengthAdjust="spacingAndGlyphs" stroke="#f0f0f0" stroke-width="0.4">27,897</text>
<text x="1171.00" y="963.06" font-size="21.00" fill="#f0f0f0" textLength="34.54" lengthAdjust="spacingAndGlyphs" stroke="#f0f0f0" stroke-width="0.4">222,196</text>
<text x="1231.00" y="963.06" font-size="21.00" fill="#f0f0f0" textLength="34.54" lengthAdjust="spacingAndGlyphs" stroke="#f0f0f0" stroke-width="0.4">229,016</text>
<text x="1296.40" y="963.06" font-size="21.00" fill="#f0f0f0" textLength="29.22" lengthAdjust="spacingAndGlyphs" stroke="#f0f0f0" stroke-width="0.4">26,704</text>
<text x="1332.00" y="963.06" font-size="21.00" fill="#f0f0f0" textLength="34.54" lengthAdjust="spacingAndGlyphs" stroke="#f0f0f0" stroke-width="0.4">106,947</text>
<text x="1374.00" y="963.06" font-size="21.00" fill="#f0f0f0" textLength="29.22" lengthAdjust="spacingAndGlyphs" stroke="#f0f0f0" stroke-width="0.4">75,101</text>
<text x="1409.60" y="963.06" font-size="21.00" fill="#f0f0f0" textLength="34.54" lengthAdjust="spacingAndGlyphs" stroke="#f0f0f0" stroke-width="0.4">304,546</text>
<text x="1452.00" y="963.06" font-size="21.00" fill="#f0f0f0" textLength="34.54" lengthAdjust="spacingAndGlyphs" stroke="#f0f0f0" stroke-width="0.4">107,756</text>
<text x="1494.00" y="963.06" font-size="21.00" fill="#f0f0f0" textLength="29.22" lengthAdjust="spacingAndGlyphs" stroke="#f0f0f0" stroke-width="0.4">81,495</text>
<text x="1530.30" y="963.06" font-size="21.00" fill="#f0f0f0" textLength="34.54" lengthAdjust="spacingAndGlyphs" stroke="#f0f0f0" stroke-width="0.4">151,961</text>
<text x="1576.80" y="963.06" font-size="21.00" fill="#f0f0f0" textLength="34.54" lengthAdjust="spacingAndGlyphs" stroke="#f0f0f0" stroke-width="0.4">367,404</text>
<text x="1633.40" y="963.06" font-size="21.00" fill="#f0f0f0" textLength="29.22" lengthAdjust="spacingAndGlyphs" stroke="#f0f0f0" stroke-width="0.4">31,298</text>
<text x="1682.30" y="963.06" font-size="21.00" fill="#f0f0f0" textLength="34.54" lengthAdjust="spacingAndGlyphs" stroke="#f0f0f0" stroke-width="0.4">332,693</text>
<text x="1733.30" y="963.06" font-size="21.00" fill="#f0f0f0" textLength="34.54" lengthAdjust="spacingAndGlyphs" stroke="#f0f0f0" stroke-width="0.4">158,533</text>
<text x="1801.00" y="963.06" font-size="21.00" fill="#f0f0f0" textLength="34.54" lengthAdjust="spacingAndGlyphs" stroke="#f0f0f0" stroke-width="0.4">462,777</text>
<rect x="378.5" y="971.84" width="1477.5" height="33.58" fill="#7b7b7b"/>
<rect x="370" y="971.84" width="8.5" height="33.58" fill="#2e2e2e"/>
<text x="381.00" y="996.34" font-size="21.00" fill="#f0f0f0" textLength="62.14" lengthAdjust="spacingAndGlyphs" stroke="#f0f0f0" stroke-width="0.4">Target x:CIE31</text>
<text x="451.00" y="996.34" font-size="21.00" fill="#f0f0f0" textLength="23.91" lengthAdjust="spacingAndGlyphs" stroke="#f0f0f0" stroke-width="0.4">0,313</text>
<text x="492.80" y="996.34" font-size="21.00" fill="#f0f0f0" textLength="23.91" lengthAdjust="spacingAndGlyphs" stroke="#f0f0f0" stroke-width="0.4">0,313</text>
<text x="534.00" y="996.34" font-size="21.00" fill="#f0f0f0" textLength="23.91" lengthAdjust="spacingAndGlyphs" stroke="#f0f0f0" stroke-width="0.4">0,313</text>
<text x="575.60" y="996.34" font-size="21.00" fill="#f0f0f0" textLength="23.91" lengthAdjust="spacingAndGlyphs" stroke="#f0f0f0" stroke-width="0.4">0,313</text>
<text x="617.50" y="996.34" font-size="21.00" fill="#f0f0f0" textLength="23.91" lengthAdjust="spacingAndGlyphs" stroke="#f0f0f0" stroke-width="0.4">0,313</text>
<text x="659.40" y="996.34" font-size="21.00" fill="#f0f0f0" textLength="23.91" lengthAdjust="spacingAndGlyphs" stroke="#f0f0f0" stroke-width="0.4">0,313</text>
<text x="689.70" y="996.34" font-size="21.00" fill="#f0f0f0" textLength="23.91" lengthAdjust="spacingAndGlyphs" stroke="#f0f0f0" stroke-width="0.4">0,400</text>
<text x="734.00" y="996.34" font-size="21.00" fill="#f0f0f0" textLength="23.91" lengthAdjust="spacingAndGlyphs" stroke="#f0f0f0" stroke-width="0.4">0,380</text>
<text x="778.75" y="996.34" font-size="21.00" fill="#f0f0f0" textLength="23.91" lengthAdjust="spacingAndGlyphs" stroke="#f0f0f0" stroke-width="0.4">0,250</text>
<text x="819.40" y="996.34" font-size="21.00" fill="#f0f0f0" textLength="23.91" lengthAdjust="spacingAndGlyphs" stroke="#f0f0f0" stroke-width="0.4">0,340</text>
<text x="855.30" y="996.34" font-size="21.00" fill="#f0f0f0" textLength="23.91" lengthAdjust="spacingAndGlyphs" stroke="#f0f0f0" stroke-width="0.4">0,268</text>
<text x="910.00" y="996.34" font-size="21.00" fill="#f0f0f0" textLength="23.91" lengthAdjust="spacingAndGlyphs" stroke="#f0f0f0" stroke-width="0.4">0,263</text>
<text x="968.30" y="996.34" font-size="21.00" fill="#f0f0f0" textLength="23.91" lengthAdjust="spacingAndGlyphs" stroke="#f0f0f0" stroke-width="0.4">0,512</text>
<text x="1010.00" y="996.34" font-size="21.00" fill="#f0f0f0" textLength="23.91" lengthAdjust="spacingAndGlyphs" stroke="#f0f0f0" stroke-width="0.4">0,217</text>
<text x="1070.40" y="996.34" font-size="21.00" fill="#f0f0f0" textLength="23.91" lengthAdjust="spacingAndGlyphs" stroke="#f0f0f0" stroke-width="0.4">0,462</text>
<text x="1134.80" y="996.34" font-size="21.00" fill="#f0f0f0" textLength="23.91" lengthAdjust="spacingAndGlyphs" stroke="#f0f0f0" stroke-width="0.4">0,290</text>
<text x="1171.00" y="996.34" font-size="21.00" fill="#f0f0f0" textLength="23.91" lengthAdjust="spacingAndGlyphs" stroke="#f0f0f0" stroke-width="0.4">0,376</text>
<text x="1231.00" y="996.34" font-size="21.00" fill="#f0f0f0" textLength="23.91" lengthAdjust="spacingAndGlyphs" stroke="#f0f0f0" stroke-width="0.4">0,474</text>
<text x="1296.40" y="996.34" font-size="21.00" fill="#f0f0f0" textLength="23.91" lengthAdjust="spacingAndGlyphs" stroke="#f0f0f0" stroke-width="0.4">0,192</text>
<text x="1332.00" y="996.34" font-size="21.00" fill="#f0f0f0" textLength="23.91" lengthAdjust="spacingAndGlyphs" stroke="#f0f0f0" stroke-width="0.4">0,305</text>
<text x="1374.00" y="996.34" font-size="21.00" fill="#f0f0f0" textLength="23.91" lengthAdjust="spacingAndGlyphs" stroke="#f0f0f0" stroke-width="0.4">0,537</text>
<text x="1409.60" y="996.34" font-size="21.00" fill="#f0f0f0" textLength="23.91" lengthAdjust="spacingAndGlyphs" stroke="#f0f0f0" stroke-width="0.4">0,447</text>
<text x="1452.00" y="996.34" font-size="21.00" fill="#f0f0f0" textLength="23.91" lengthAdjust="spacingAndGlyphs" stroke="#f0f0f0" stroke-width="0.4">0,374</text>
<text x="1494.00" y="996.34" font-size="21.00" fill="#f0f0f0" textLength="23.91" lengthAdjust="spacingAndGlyphs" stroke="#f0f0f0" stroke-width="0.4">0,208</text>
<text x="1530.30" y="996.34" font-size="21.00" fill="#f0f0f0" textLength="23.91" lengthAdjust="spacingAndGlyphs" stroke="#f0f0f0" stroke-width="0.4">0,640</text>
<text x="1576.80" y="996.34" font-size="21.00" fill="#f0f0f0" textLength="23.91" lengthAdjust="spacingAndGlyphs" stroke="#f0f0f0" stroke-width="0.4">0,300</text>
<text x="1633.40" y="996.34" font-size="21.00" fill="#f0f0f0" textLength="23.91" lengthAdjust="spacingAndGlyphs" stroke="#f0f0f0" stroke-width="0.4">0,150</text>
<text x="1682.30" y="996.34" font-size="21.00" fill="#f0f0f0" textLength="23.91" lengthAdjust="spacingAndGlyphs" stroke="#f0f0f0" stroke-width="0.4">0,225</text>
<text x="1733.30" y="996.34" font-size="21.00" fill="#f0f0f0" textLength="23.91" lengthAdjust="spacingAndGlyphs" stroke="#f0f0f0" stroke-width="0.4">0,321</text>
<text x="1801.00" y="996.34" font-size="21.00" fill="#f0f0f0" textLength="23.91" lengthAdjust="spacingAndGlyphs" stroke="#f0f0f0" stroke-width="0.4">0,419</text>
<rect x="378.5" y="1005.12" width="1477.5" height="33.58" fill="#444444"/>
<rect x="370" y="1005.12" width="8.5" height="33.58" fill="#262626"/>
<text x="381.00" y="1029.62" font-size="21.00" fill="#f0f0f0" textLength="62.14" lengthAdjust="spacingAndGlyphs" stroke="#f0f0f0" stroke-width="0.4">Target y:CIE31</text>
<text x="451.00" y="1029.62" font-size="21.00" fill="#f0f0f0" textLength="23.91" lengthAdjust="spacingAndGlyphs" stroke="#f0f0f0" stroke-width="0.4">0,329</text>
<text x="492.80" y="1029.62" font-size="21.00" fill="#f0f0f0" textLength="23.91" lengthAdjust="spacingAndGlyphs" stroke="#f0f0f0" stroke-width="0.4">0,329</text>
<text x="534.00" y="1029.62" font-size="21.00" fill="#f0f0f0" textLength="23.91" lengthAdjust="spacingAndGlyphs" stroke="#f0f0f0" stroke-width="0.4">0,329</text>
<text x="575.60" y="1029.62" font-size="21.00" fill="#f0f0f0" textLength="23.91" lengthAdjust="spacingAndGlyphs" stroke="#f0f0f0" stroke-width="0.4">0,329</text>
<text x="617.50" y="1029.62" font-size="21.00" fill="#f0f0f0" textLength="23.91" lengthAdjust="spacingAndGlyphs" stroke="#f0f0f0" stroke-width="0.4">0,329</text>
<text x="659.40" y="1029.62" font-size="21.00" fill="#f0f0f0" textLength="23.91" lengthAdjust="spacingAndGlyphs" stroke="#f0f0f0" stroke-width="0.4">0,329</text>
<text x="689.70" y="1029.62" font-size="21.00" fill="#f0f0f0" textLength="23.91" lengthAdjust="spacingAndGlyphs" stroke="#f0f0f0" stroke-width="0.4">0,364</text>
<text x="734.00" y="1029.62" font-size="21.00" fill="#f0f0f0" textLength="23.91" lengthAdjust="spacingAndGlyphs" stroke="#f0f0f0" stroke-width="0.4">0,356</text>
<text x="778.75" y="1029.62" font-size="21.00" fill="#f0f0f0" textLength="23.91" lengthAdjust="spacingAndGlyphs" stroke="#f0f0f0" stroke-width="0.4">0,266</text>
<text x="819.40" y="1029.62" font-size="21.00" fill="#f0f0f0" textLength="23.91" lengthAdjust="spacingAndGlyphs" stroke="#f0f0f0" stroke-width="0.4">0,427</text>
<text x="855.30" y="1029.62" font-size="21.00" fill="#f0f0f0" textLength="23.91" lengthAdjust="spacingAndGlyphs" stroke="#f0f0f0" stroke-width="0.4">0,253</text>
<text x="910.00" y="1029.62" font-size="21.00" fill="#f0f0f0" textLength="23.91" lengthAdjust="spacingAndGlyphs" stroke="#f0f0f0" stroke-width="0.4">0,362</text>
<text x="968.30" y="1029.62" font-size="21.00" fill="#f0f0f0" textLength="23.91" lengthAdjust="spacingAndGlyphs" stroke="#f0f0f0" stroke-width="0.4">0,406</text>
<text x="1010.00" y="1029.62" font-size="21.00" fill="#f0f0f0" textLength="23.91" lengthAdjust="spacingAndGlyphs" stroke="#f0f0f0" stroke-width="0.4">0,192</text>
<text x="1070.40" y="1029.62" font-size="21.00" fill="#f0f0f0" textLength="23.91" lengthAdjust="spacingAndGlyphs" stroke="#f0f0f0" stroke-width="0.4">0,313</text>
<text x="1134.80" y="1029.62" font-size="21.00" fill="#f0f0f0" textLength="23.91" lengthAdjust="spacingAndGlyphs" stroke="#f0f0f0" stroke-width="0.4">0,221</text>
<text x="1171.00" y="1029.62" font-size="21.00" fill="#f0f0f0" textLength="23.91" lengthAdjust="spacingAndGlyphs" stroke="#f0f0f0" stroke-width="0.4">0,493</text>
<text x="1231.00" y="1029.62" font-size="21.00" fill="#f0f0f0" textLength="23.91" lengthAdjust="spacingAndGlyphs" stroke="#f0f0f0" stroke-width="0.4">0,439</text>
<text x="1296.40" y="1029.62" font-size="21.00" fill="#f0f0f0" textLength="23.91" lengthAdjust="spacingAndGlyphs" stroke="#f0f0f0" stroke-width="0.4">0,141</text>
<text x="1332.00" y="1029.62" font-size="21.00" fill="#f0f0f0" textLength="23.91" lengthAdjust="spacingAndGlyphs" stroke="#f0f0f0" stroke-width="0.4">0,489</text>
<text x="1374.00" y="1029.62" font-size="21.00" fill="#f0f0f0" textLength="23.91" lengthAdjust="spacingAndGlyphs" stroke="#f0f0f0" stroke-width="0.4">0,317</text>
<text x="1409.60" y="1029.62" font-size="21.00" fill="#f0f0f0" textLength="23.91" lengthAdjust="spacingAndGlyphs" stroke="#f0f0f0" stroke-width="0.4">0,474</text>
<text x="1452.00" y="1029.62" font-size="21.00" fill="#f0f0f0" textLength="23.91" lengthAdjust="spacingAndGlyphs" stroke="#f0f0f0" stroke-width="0.4">0,247</text>
<text x="1494.00" y="1029.62" font-size="21.00" fill="#f0f0f0" textLength="23.91" lengthAdjust="spacingAndGlyphs" stroke="#f0f0f0" stroke-width="0.4">0,270</text>
<text x="1530.30" y="1029.62" font-size="21.00" fill="#f0f0f0" textLength="23.91" lengthAdjust="spacingAndGlyphs" stroke="#f0f0f0" stroke-width="0.4">0,330</text>
<text x="1576.80" y="1029.62" font-size="21.00" fill="#f0f0f0" textLength="23.91" lengthAdjust="spacingAndGlyphs" stroke="#f0f0f0" stroke-width="0.4">0,600</text>
<text x="1633.40" y="1029.62" font-size="21.00" fill="#f0f0f0" textLength="23.91" lengthAdjust="spacingAndGlyphs" stroke="#f0f0f0" stroke-width="0.4">0,060</text>
<text x="1682.30" y="1029.62" font-size="21.00" fill="#f0f0f0" textLength="23.91" lengthAdjust="spacingAndGlyphs" stroke="#f0f0f0" stroke-width="0.4">0,329</text>
<text x="1733.30" y="1029.62" font-size="21.00" fill="#f0f0f0" textLength="23.91" lengthAdjust="spacingAndGlyphs" stroke="#f0f0f0" stroke-width="0.4">0,154</text>
<text x="1801.00" y="1029.62" font-size="21.00" fill="#f0f0f0" textLength="23.91" lengthAdjust="spacingAndGlyphs" stroke="#f0f0f0" stroke-width="0.4">0,505</text>
<rect x="378.5" y="1038.40" width="1477.5" height="33.58" fill="#7b7b7b"/>
<rect x="370" y="1038.40" width="8.5" height="33.58" fill="#2e2e2e"/>
<text x="381.00" y="1062.90" font-size="21.00" fill="#f0f0f0" textLength="35.44" lengthAdjust="spacingAndGlyphs" stroke="#f0f0f0" stroke-width="0.4">Target Y</text>
<text x="451.00" y="1062.90" font-size="21.00" fill="#f0f0f0" textLength="34.54" lengthAdjust="spacingAndGlyphs" stroke="#f0f0f0" stroke-width="0.4">422,803</text>
<text x="492.80" y="1062.90" font-size="21.00" fill="#f0f0f0" textLength="34.54" lengthAdjust="spacingAndGlyphs" stroke="#f0f0f0" stroke-width="0.4">334,563</text>
<text x="534.00" y="1062.90" font-size="21.00" fill="#f0f0f0" textLength="34.54" lengthAdjust="spacingAndGlyphs" stroke="#f0f0f0" stroke-width="0.4">269,578</text>
<text x="575.60" y="1062.90" font-size="21.00" fill="#f0f0f0" textLength="34.54" lengthAdjust="spacingAndGlyphs" stroke="#f0f0f0" stroke-width="0.4">207,605</text>
<text x="617.50" y="1062.90" font-size="21.00" fill="#f0f0f0" textLength="34.54" lengthAdjust="spacingAndGlyphs" stroke="#f0f0f0" stroke-width="0.4">144,562</text>
<text x="659.40" y="1062.90" font-size="21.00" fill="#f0f0f0" textLength="23.91" lengthAdjust="spacingAndGlyphs" stroke="#f0f0f0" stroke-width="0.4">0,000</text>
<text x="689.70" y="1062.90" font-size="21.00" fill="#f0f0f0" textLength="29.22" lengthAdjust="spacingAndGlyphs" stroke="#f0f0f0" stroke-width="0.4">42,590</text>
<text x="734.00" y="1062.90" font-size="21.00" fill="#f0f0f0" textLength="34.54" lengthAdjust="spacingAndGlyphs" stroke="#f0f0f0" stroke-width="0.4">147,538</text>
<text x="778.75" y="1062.90" font-size="21.00" fill="#f0f0f0" textLength="29.22" lengthAdjust="spacingAndGlyphs" stroke="#f0f0f0" stroke-width="0.4">79,057</text>
<text x="819.40" y="1062.90" font-size="21.00" fill="#f0f0f0" textLength="29.22" lengthAdjust="spacingAndGlyphs" stroke="#f0f0f0" stroke-width="0.4">55,102</text>
<text x="855.30" y="1062.90" font-size="21.00" fill="#f0f0f0" textLength="29.22" lengthAdjust="spacingAndGlyphs" stroke="#f0f0f0" stroke-width="0.4">98,591</text>
<text x="910.00" y="1062.90" font-size="21.00" fill="#f0f0f0" textLength="34.54" lengthAdjust="spacingAndGlyphs" stroke="#f0f0f0" stroke-width="0.4">177,040</text>
<text x="968.30" y="1062.90" font-size="21.00" fill="#f0f0f0" textLength="34.54" lengthAdjust="spacingAndGlyphs" stroke="#f0f0f0" stroke-width="0.4">119,855</text>
<text x="1010.00" y="1062.90" font-size="21.00" fill="#f0f0f0" textLength="29.22" lengthAdjust="spacingAndGlyphs" stroke="#f0f0f0" stroke-width="0.4">49,696</text>
<text x="1070.40" y="1062.90" font-size="21.00" fill="#f0f0f0" textLength="29.22" lengthAdjust="spacingAndGlyphs" stroke="#f0f0f0" stroke-width="0.4">78,961</text>
<text x="1134.80" y="1062.90" font-size="21.00" fill="#f0f0f0" textLength="29.22" lengthAdjust="spacingAndGlyphs" stroke="#f0f0f0" stroke-width="0.4">28,220</text>
<text x="1171.00" y="1062.90" font-size="21.00" fill="#f0f0f0" textLength="34.54" lengthAdjust="spacingAndGlyphs" stroke="#f0f0f0" stroke-width="0.4">180,777</text>
<text x="1231.00" y="1062.90" font-size="21.00" fill="#f0f0f0" textLength="34.54" lengthAdjust="spacingAndGlyphs" stroke="#f0f0f0" stroke-width="0.4">179,746</text>
<text x="1296.40" y="1062.90" font-size="21.00" fill="#f0f0f0" textLength="29.22" lengthAdjust="spacingAndGlyphs" stroke="#f0f0f0" stroke-width="0.4">26,395</text>
<text x="1332.00" y="1062.90" font-size="21.00" fill="#f0f0f0" textLength="29.22" lengthAdjust="spacingAndGlyphs" stroke="#f0f0f0" stroke-width="0.4">97,132</text>
<text x="1374.00" y="1062.90" font-size="21.00" fill="#f0f0f0" textLength="29.22" lengthAdjust="spacingAndGlyphs" stroke="#f0f0f0" stroke-width="0.4">49,307</text>
<text x="1409.60" y="1062.90" font-size="21.00" fill="#f0f0f0" textLength="34.54" lengthAdjust="spacingAndGlyphs" stroke="#f0f0f0" stroke-width="0.4">249,299</text>
<text x="1452.00" y="1062.90" font-size="21.00" fill="#f0f0f0" textLength="29.22" lengthAdjust="spacingAndGlyphs" stroke="#f0f0f0" stroke-width="0.4">79,597</text>
<text x="1494.00" y="1062.90" font-size="21.00" fill="#f0f0f0" textLength="29.22" lengthAdjust="spacingAndGlyphs" stroke="#f0f0f0" stroke-width="0.4">82,099</text>
<text x="1530.30" y="1062.90" font-size="21.00" fill="#f0f0f0" textLength="29.22" lengthAdjust="spacingAndGlyphs" stroke="#f0f0f0" stroke-width="0.4">89,912</text>
<text x="1576.80" y="1062.90" font-size="21.00" fill="#f0f0f0" textLength="34.54" lengthAdjust="spacingAndGlyphs" stroke="#f0f0f0" stroke-width="0.4">302,371</text>
<text x="1633.40" y="1062.90" font-size="21.00" fill="#f0f0f0" textLength="29.22" lengthAdjust="spacingAndGlyphs" stroke="#f0f0f0" stroke-width="0.4">30,520</text>
<text x="1682.30" y="1062.90" font-size="21.00" fill="#f0f0f0" textLength="34.54" lengthAdjust="spacingAndGlyphs" stroke="#f0f0f0" stroke-width="0.4">332,891</text>
<text x="1733.30" y="1062.90" font-size="21.00" fill="#f0f0f0" textLength="34.54" lengthAdjust="spacingAndGlyphs" stroke="#f0f0f0" stroke-width="0.4">120,432</text>
<text x="1801.00" y="1062.90" font-size="21.00" fill="#f0f0f0" textLength="34.54" lengthAdjust="spacingAndGlyphs" stroke="#f0f0f0" stroke-width="0.4">392,282</text>
<rect x="378.5" y="1071.68" width="1477.5" height="33.58" fill="#444444"/>
<rect x="370" y="1071.68" width="8.5" height="33.58" fill="#262626"/>
<text x="381.00" y="1096.18" font-size="21.00" fill="#f0f0f0" textLength="35.46" lengthAdjust="spacingAndGlyphs" stroke="#f0f0f0" stroke-width="0.4">ΔE 2000</text>
<text x="451.00" y="1096.18" font-size="21.00" fill="#f0f0f0" textLength="23.91" lengthAdjust="spacingAndGlyphs" stroke="#f0f0f0" stroke-width="0.4">8,979</text>
<text x="492.80" y="1096.18" font-size="21.00" fill="#f0f0f0" textLength="23.91" lengthAdjust="spacingAndGlyphs" stroke="#f0f0f0" stroke-width="0.4">8,519</text>
<text x="534.00" y="1096.18" font-size="21.00" fill="#f0f0f0" textLength="23.91" lengthAdjust="spacingAndGlyphs" stroke="#f0f0f0" stroke-width="0.4">8,203</text>
<text x="575.60" y="1096.18" font-size="21.00" fill="#f0f0f0" textLength="23.91" lengthAdjust="spacingAndGlyphs" stroke="#f0f0f0" stroke-width="0.4">7,752</text>
<text x="617.50" y="1096.18" font-size="21.00" fill="#f0f0f0" textLength="23.91" lengthAdjust="spacingAndGlyphs" stroke="#f0f0f0" stroke-width="0.4">6,754</text>
<text x="659.40" y="1096.18" font-size="21.00" fill="#f0f0f0" textLength="23.91" lengthAdjust="spacingAndGlyphs" stroke="#f0f0f0" stroke-width="0.4">0,435</text>
<text x="689.70" y="1096.18" font-size="21.00" fill="#f0f0f0" textLength="23.91" lengthAdjust="spacingAndGlyphs" stroke="#f0f0f0" stroke-width="0.4">2,242</text>
<text x="734.00" y="1096.18" font-size="21.00" fill="#f0f0f0" textLength="23.91" lengthAdjust="spacingAndGlyphs" stroke="#f0f0f0" stroke-width="0.4">6,899</text>
<text x="778.75" y="1096.18" font-size="21.00" fill="#f0f0f0" textLength="23.91" lengthAdjust="spacingAndGlyphs" stroke="#f0f0f0" stroke-width="0.4">6,340</text>
<text x="819.40" y="1096.18" font-size="21.00" fill="#f0f0f0" textLength="23.91" lengthAdjust="spacingAndGlyphs" stroke="#f0f0f0" stroke-width="0.4">2,829</text>
<text x="855.30" y="1096.18" font-size="21.00" fill="#f0f0f0" textLength="23.91" lengthAdjust="spacingAndGlyphs" stroke="#f0f0f0" stroke-width="0.4">7,048</text>
<text x="910.00" y="1096.18" font-size="21.00" fill="#f0f0f0" textLength="23.91" lengthAdjust="spacingAndGlyphs" stroke="#f0f0f0" stroke-width="0.4">8,258</text>
<text x="968.30" y="1096.18" font-size="21.00" fill="#f0f0f0" textLength="23.91" lengthAdjust="spacingAndGlyphs" stroke="#f0f0f0" stroke-width="0.4">9,274</text>
<text x="1010.00" y="1096.18" font-size="21.00" fill="#f0f0f0" textLength="23.91" lengthAdjust="spacingAndGlyphs" stroke="#f0f0f0" stroke-width="0.4">6,341</text>
<text x="1070.40" y="1096.18" font-size="21.00" fill="#f0f0f0" textLength="23.91" lengthAdjust="spacingAndGlyphs" stroke="#f0f0f0" stroke-width="0.4">9,176</text>
<text x="1134.80" y="1096.18" font-size="21.00" fill="#f0f0f0" textLength="23.91" lengthAdjust="spacingAndGlyphs" stroke="#f0f0f0" stroke-width="0.4">3,394</text>
<text x="1171.00" y="1096.18" font-size="21.00" fill="#f0f0f0" textLength="23.91" lengthAdjust="spacingAndGlyphs" stroke="#f0f0f0" stroke-width="0.4">7,079</text>
<text x="1231.00" y="1096.18" font-size="21.00" fill="#f0f0f0" textLength="23.91" lengthAdjust="spacingAndGlyphs" stroke="#f0f0f0" stroke-width="0.4">8,253</text>
<text x="1296.40" y="1096.18" font-size="21.00" fill="#f0f0f0" textLength="23.91" lengthAdjust="spacingAndGlyphs" stroke="#f0f0f0" stroke-width="0.4">6,104</text>
<text x="1332.00" y="1096.18" font-size="21.00" fill="#f0f0f0" textLength="23.91" lengthAdjust="spacingAndGlyphs" stroke="#f0f0f0" stroke-width="0.4">7,063</text>
<text x="1374.00" y="1096.18" font-size="21.00" fill="#f0f0f0" textLength="23.91" lengthAdjust="spacingAndGlyphs" stroke="#f0f0f0" stroke-width="0.4">9,456</text>
<text x="1409.60" y="1096.18" font-size="21.00" fill="#f0f0f0" textLength="23.91" lengthAdjust="spacingAndGlyphs" stroke="#f0f0f0" stroke-width="0.4">7,605</text>
<text x="1452.00" y="1096.18" font-size="21.00" fill="#f0f0f0" textLength="23.91" lengthAdjust="spacingAndGlyphs" stroke="#f0f0f0" stroke-width="0.4">7,931</text>
<text x="1494.00" y="1096.18" font-size="21.00" fill="#f0f0f0" textLength="23.91" lengthAdjust="spacingAndGlyphs" stroke="#f0f0f0" stroke-width="0.4">6,511</text>
<text x="1530.30" y="1096.18" font-size="21.00" fill="#f0f0f0" textLength="29.22" lengthAdjust="spacingAndGlyphs" stroke="#f0f0f0" stroke-width="0.4">16,530</text>
<text x="1576.80" y="1096.18" font-size="21.00" fill="#f0f0f0" textLength="23.91" lengthAdjust="spacingAndGlyphs" stroke="#f0f0f0" stroke-width="0.4">9,989</text>
<text x="1633.40" y="1096.18" font-size="21.00" fill="#f0f0f0" textLength="23.91" lengthAdjust="spacingAndGlyphs" stroke="#f0f0f0" stroke-width="0.4">6,540</text>
<text x="1682.30" y="1096.18" font-size="21.00" fill="#f0f0f0" textLength="23.91" lengthAdjust="spacingAndGlyphs" stroke="#f0f0f0" stroke-width="0.4">7,619</text>
<text x="1733.30" y="1096.18" font-size="21.00" fill="#f0f0f0" textLength="23.91" lengthAdjust="spacingAndGlyphs" stroke="#f0f0f0" stroke-width="0.4">6,843</text>
<text x="1801.00" y="1096.18" font-size="21.00" fill="#f0f0f0" textLength="23.91" lengthAdjust="spacingAndGlyphs" stroke="#f0f0f0" stroke-width="0.4">6,992</text>
<text x="450.60" y="862.20" font-size="19.00" fill="#f8f8f8" textLength="25.60" lengthAdjust="spacingAndGlyphs" stroke="#f8f8f8" stroke-width="0.4">White</text>
<text x="492.80" y="862.20" font-size="19.00" fill="#f8f8f8" textLength="31.90" lengthAdjust="spacingAndGlyphs" stroke="#f8f8f8" stroke-width="0.4">Gray 80</text>
<text x="534.00" y="862.20" font-size="19.00" fill="#f8f8f8" textLength="32.20" lengthAdjust="spacingAndGlyphs" stroke="#f8f8f8" stroke-width="0.4">Gray 65</text>
<text x="575.60" y="862.20" font-size="19.00" fill="#f8f8f8" textLength="32.80" lengthAdjust="spacingAndGlyphs" stroke="#f8f8f8" stroke-width="0.4">Gray 50</text>
<text x="617.80" y="862.20" font-size="19.00" fill="#f8f8f8" textLength="31.90" lengthAdjust="spacingAndGlyphs" stroke="#f8f8f8" stroke-width="0.4">Gray 35</text>
<text x="659.40" y="862.20" font-size="19.00" fill="#f8f8f8" textLength="21.90" lengthAdjust="spacingAndGlyphs" stroke="#f8f8f8" stroke-width="0.4">Black</text>
<text x="689.70" y="862.20" font-size="19.00" fill="#f8f8f8" textLength="39.00" lengthAdjust="spacingAndGlyphs" stroke="#f8f8f8" stroke-width="0.4">Dark Skin</text>
<text x="729.70" y="862.20" font-size="19.00" fill="#f8f8f8" textLength="44.30" lengthAdjust="spacingAndGlyphs" stroke="#f8f8f8" stroke-width="0.4">Light Skin</text>
<text x="778.75" y="862.20" font-size="19.00" fill="#f8f8f8" textLength="35.90" lengthAdjust="spacingAndGlyphs" stroke="#f8f8f8" stroke-width="0.4">Blue Sky</text>
<text x="819.40" y="862.20" font-size="19.00" fill="#f8f8f8" textLength="29.70" lengthAdjust="spacingAndGlyphs" stroke="#f8f8f8" stroke-width="0.4">Foliage</text>
<text x="855.30" y="862.20" font-size="19.00" fill="#f8f8f8" textLength="50.00" lengthAdjust="spacingAndGlyphs" stroke="#f8f8f8" stroke-width="0.4">Blue Flower</text>
<text x="910.00" y="862.20" font-size="19.00" fill="#f8f8f8" textLength="53.30" lengthAdjust="spacingAndGlyphs" stroke="#f8f8f8" stroke-width="0.4">Bluish Green</text>
<text x="968.30" y="862.20" font-size="19.00" fill="#f8f8f8" textLength="30.90" lengthAdjust="spacingAndGlyphs" stroke="#f8f8f8" stroke-width="0.4">Orange</text>
<text x="1010.00" y="862.20" font-size="19.00" fill="#f8f8f8" textLength="54.80" lengthAdjust="spacingAndGlyphs" stroke="#f8f8f8" stroke-width="0.4">Purplish Blue</text>
<text x="1070.40" y="862.20" font-size="19.00" fill="#f8f8f8" textLength="59.80" lengthAdjust="spacingAndGlyphs" stroke="#f8f8f8" stroke-width="0.4">Moderate Red</text>
<text x="1134.80" y="862.20" font-size="19.00" fill="#f8f8f8" textLength="28.30" lengthAdjust="spacingAndGlyphs" stroke="#f8f8f8" stroke-width="0.4">Purple</text>
<text x="1171.00" y="862.20" font-size="19.00" fill="#f8f8f8" textLength="55.40" lengthAdjust="spacingAndGlyphs" stroke="#f8f8f8" stroke-width="0.4">Yellow Green</text>
<text x="1231.00" y="862.20" font-size="19.00" fill="#f8f8f8" textLength="60.40" lengthAdjust="spacingAndGlyphs" stroke="#f8f8f8" stroke-width="0.4">Orange Yellow</text>
<text x="1296.40" y="862.20" font-size="19.00" fill="#f8f8f8" textLength="19.00" lengthAdjust="spacingAndGlyphs" stroke="#f8f8f8" stroke-width="0.4">Blue</text>
<text x="1332.30" y="862.20" font-size="19.00" fill="#f8f8f8" textLength="26.20" lengthAdjust="spacingAndGlyphs" stroke="#f8f8f8" stroke-width="0.4">Green</text>
<text x="1374.00" y="862.20" font-size="19.00" fill="#f8f8f8" textLength="16.60" lengthAdjust="spacingAndGlyphs" stroke="#f8f8f8" stroke-width="0.4">Red</text>
<text x="1409.60" y="862.20" font-size="19.00" fill="#f8f8f8" textLength="27.70" lengthAdjust="spacingAndGlyphs" stroke="#f8f8f8" stroke-width="0.4">Yellow</text>
<text x="1451.90" y="862.20" font-size="19.00" fill="#f8f8f8" textLength="37.90" lengthAdjust="spacingAndGlyphs" stroke="#f8f8f8" stroke-width="0.4">Magenta</text>
<text x="1494.20" y="862.20" font-size="19.00" fill="#f8f8f8" textLength="20.80" lengthAdjust="spacingAndGlyphs" stroke="#f8f8f8" stroke-width="0.4">Cyan</text>
<text x="1530.30" y="862.20" font-size="19.00" fill="#f8f8f8" textLength="41.80" lengthAdjust="spacingAndGlyphs" stroke="#f8f8f8" stroke-width="0.4">100% Red</text>
<text x="1576.80" y="862.20" font-size="19.00" fill="#f8f8f8" textLength="51.50" lengthAdjust="spacingAndGlyphs" stroke="#f8f8f8" stroke-width="0.4">100% Green</text>
<text x="1633.40" y="862.20" font-size="19.00" fill="#f8f8f8" textLength="43.70" lengthAdjust="spacingAndGlyphs" stroke="#f8f8f8" stroke-width="0.4">100% Blue</text>
<text x="1682.30" y="862.20" font-size="19.00" fill="#f8f8f8" textLength="46.00" lengthAdjust="spacingAndGlyphs" stroke="#f8f8f8" stroke-width="0.4">100% Cyan</text>
<text x="1733.30" y="862.20" font-size="19.00" fill="#f8f8f8" textLength="62.60" lengthAdjust="spacingAndGlyphs" stroke="#f8f8f8" stroke-width="0.4">100% Magenta</text>
<text x="1801.00" y="862.20" font-size="19.00" fill="#f8f8f8" textLength="53.20" lengthAdjust="spacingAndGlyphs" stroke="#f8f8f8" stroke-width="0.4">100% Yellow</text>
<rect x="1" y="1131" width="1918" height="54" fill="#2b2b2b"/>
<rect x="1" y="1183.5" width="1918" height="1.5" fill="#1a1616"/>
<defs><linearGradient id="swb" x1="0" y1="0" x2="0" y2="1"><stop offset="0" stop-color="#a2a2a2"/><stop offset="0.5" stop-color="#858585"/><stop offset="1" stop-color="#5c5c5c"/></linearGradient><linearGradient id="ctl" x1="0" y1="0" x2="0" y2="1"><stop offset="0" stop-color="#c4c4c4"/><stop offset="1" stop-color="#878787"/></linearGradient><radialGradient id="ctlc" cx="0.5" cy="0.3" r="0.7"><stop offset="0" stop-color="#8a8a8a"/><stop offset="1" stop-color="#b4b4b4"/></radialGradient></defs>
<rect x="2.0" y="1132.5" width="52.5" height="51" rx="3.5" fill="url(#swb)" stroke="#5a5a5a" stroke-width="0.6"/>
<rect x="6.0" y="1137.3" width="44.5" height="30.2" rx="3.5" fill="#ffffff" stroke="#6e6e6e" stroke-width="0.8"/>
<text x="28.25" y="1180.00" font-size="10.50" fill="#2a2a2a" text-anchor="middle" textLength="24.58" lengthAdjust="spacingAndGlyphs" font-weight="bold" >White</text>
<rect x="56.8" y="1132.5" width="52.5" height="51" rx="3.5" fill="url(#swb)" stroke="#5a5a5a" stroke-width="0.6"/>
<rect x="60.8" y="1137.3" width="44.5" height="30.2" rx="3.5" fill="#e6e6e6" stroke="#6e6e6e" stroke-width="0.8"/>
<text x="83.01" y="1180.00" font-size="10.50" fill="#2a2a2a" text-anchor="middle" textLength="33.13" lengthAdjust="spacingAndGlyphs" font-weight="bold" >Gray 80</text>
<rect x="111.5" y="1132.5" width="52.5" height="51" rx="3.5" fill="url(#swb)" stroke="#5a5a5a" stroke-width="0.6"/>
<rect x="115.5" y="1137.3" width="44.5" height="30.2" rx="3.5" fill="#d4d4d4" stroke="#6e6e6e" stroke-width="0.8"/>
<text x="137.77" y="1180.00" font-size="10.50" fill="#2a2a2a" text-anchor="middle" textLength="33.13" lengthAdjust="spacingAndGlyphs" font-weight="bold" >Gray 65</text>
<rect x="166.3" y="1132.5" width="52.5" height="51" rx="3.5" fill="url(#swb)" stroke="#5a5a5a" stroke-width="0.6"/>
<rect x="170.3" y="1137.3" width="44.5" height="30.2" rx="3.5" fill="#bdbdbd" stroke="#6e6e6e" stroke-width="0.8"/>
<text x="192.53" y="1180.00" font-size="10.50" fill="#2a2a2a" text-anchor="middle" textLength="33.13" lengthAdjust="spacingAndGlyphs" font-weight="bold" >Gray 50</text>
<rect x="221.0" y="1132.5" width="52.5" height="51" rx="3.5" fill="url(#swb)" stroke="#5a5a5a" stroke-width="0.6"/>
<rect x="225.0" y="1137.3" width="44.5" height="30.2" rx="3.5" fill="#a0a0a0" stroke="#6e6e6e" stroke-width="0.8"/>
<text x="247.29" y="1180.00" font-size="10.50" fill="#2a2a2a" text-anchor="middle" textLength="33.13" lengthAdjust="spacingAndGlyphs" font-weight="bold" >Gray 35</text>
<rect x="275.8" y="1132.5" width="52.5" height="51" rx="3.5" fill="url(#swb)" stroke="#5a5a5a" stroke-width="0.6"/>
<rect x="279.8" y="1137.3" width="44.5" height="30.2" rx="3.5" fill="#000000" stroke="#6e6e6e" stroke-width="0.8"/>
<text x="302.05" y="1180.00" font-size="10.50" fill="#2a2a2a" text-anchor="middle" textLength="24.10" lengthAdjust="spacingAndGlyphs" font-weight="bold" >Black</text>
<rect x="330.6" y="1132.5" width="52.5" height="51" rx="3.5" fill="url(#swb)" stroke="#5a5a5a" stroke-width="0.6"/>
<rect x="334.6" y="1137.3" width="44.5" height="30.2" rx="3.5" fill="#7a5444" stroke="#6e6e6e" stroke-width="0.8"/>
<text x="356.81" y="1180.00" font-size="10.50" fill="#2a2a2a" text-anchor="middle" textLength="41.66" lengthAdjust="spacingAndGlyphs" font-weight="bold" >Dark Skin</text>
<rect x="385.3" y="1132.5" width="52.5" height="51" rx="3.5" fill="url(#swb)" stroke="#5a5a5a" stroke-width="0.6"/>
<rect x="389.3" y="1137.3" width="44.5" height="30.2" rx="3.5" fill="#c89680" stroke="#6e6e6e" stroke-width="0.8"/>
<text x="411.57" y="1180.00" font-size="10.50" fill="#2a2a2a" text-anchor="middle" textLength="43.64" lengthAdjust="spacingAndGlyphs" font-weight="bold" >Light Skin</text>
<rect x="440.1" y="1132.5" width="52.5" height="51" rx="3.5" fill="url(#swb)" stroke="#5a5a5a" stroke-width="0.6"/>
<rect x="444.1" y="1137.3" width="44.5" height="30.2" rx="3.5" fill="#5e7ea6" stroke="#6e6e6e" stroke-width="0.8"/>
<text x="466.33" y="1180.00" font-size="10.50" fill="#2a2a2a" text-anchor="middle" textLength="38.14" lengthAdjust="spacingAndGlyphs" font-weight="bold" >Blue Sky</text>
<rect x="494.8" y="1132.5" width="52.5" height="51" rx="3.5" fill="url(#swb)" stroke="#5a5a5a" stroke-width="0.6"/>
<rect x="498.8" y="1137.3" width="44.5" height="30.2" rx="3.5" fill="#5a7040" stroke="#6e6e6e" stroke-width="0.8"/>
<text x="521.09" y="1180.00" font-size="10.50" fill="#2a2a2a" text-anchor="middle" textLength="31.61" lengthAdjust="spacingAndGlyphs" font-weight="bold" >Foliage</text>
<rect x="549.6" y="1132.5" width="52.5" height="51" rx="3.5" fill="url(#swb)" stroke="#5a5a5a" stroke-width="0.6"/>
<rect x="553.6" y="1137.3" width="44.5" height="30.2" rx="3.5" fill="#8880b8" stroke="#6e6e6e" stroke-width="0.8"/>
<text x="575.85" y="1180.00" font-size="10.50" fill="#2a2a2a" text-anchor="middle" textLength="50.00" lengthAdjust="spacingAndGlyphs" font-weight="bold" >Blue Flower</text>
<rect x="604.4" y="1132.5" width="52.5" height="51" rx="3.5" fill="url(#swb)" stroke="#5a5a5a" stroke-width="0.6"/>
<rect x="608.4" y="1137.3" width="44.5" height="20" rx="3.5" fill="#62c4aa" stroke="#6e6e6e" stroke-width="0.8"/>
<text x="616.81" y="1169.70" font-size="10.50" fill="#2a2a2a" textLength="27.59" lengthAdjust="spacingAndGlyphs" font-weight="bold" >Bluish</text>
<text x="616.81" y="1179.80" font-size="10.50" fill="#2a2a2a" textLength="26.10" lengthAdjust="spacingAndGlyphs" font-weight="bold" >Green</text>
<rect x="659.1" y="1132.5" width="52.5" height="51" rx="3.5" fill="url(#swb)" stroke="#5a5a5a" stroke-width="0.6"/>
<rect x="663.1" y="1137.3" width="44.5" height="30.2" rx="3.5" fill="#e07a2a" stroke="#6e6e6e" stroke-width="0.8"/>
<text x="685.37" y="1180.00" font-size="10.50" fill="#2a2a2a" text-anchor="middle" textLength="31.61" lengthAdjust="spacingAndGlyphs" font-weight="bold" >Orange</text>
<rect x="713.9" y="1132.5" width="52.5" height="51" rx="3.5" fill="url(#swb)" stroke="#5a5a5a" stroke-width="0.6"/>
<rect x="717.9" y="1137.3" width="44.5" height="20" rx="3.5" fill="#4a60ae" stroke="#6e6e6e" stroke-width="0.8"/>
<text x="722.07" y="1169.70" font-size="10.50" fill="#2a2a2a" textLength="36.12" lengthAdjust="spacingAndGlyphs" font-weight="bold" >Purplish</text>
<text x="722.07" y="1179.80" font-size="10.50" fill="#2a2a2a" textLength="19.57" lengthAdjust="spacingAndGlyphs" font-weight="bold" >Blue</text>
<rect x="768.6" y="1132.5" width="52.5" height="51" rx="3.5" fill="url(#swb)" stroke="#5a5a5a" stroke-width="0.6"/>
<rect x="772.6" y="1137.3" width="44.5" height="20" rx="3.5" fill="#d05462" stroke="#6e6e6e" stroke-width="0.8"/>
<text x="774.82" y="1169.70" font-size="10.50" fill="#2a2a2a" textLength="40.14" lengthAdjust="spacingAndGlyphs" font-weight="bold" >Moderate</text>
<text x="774.82" y="1179.80" font-size="10.50" fill="#2a2a2a" textLength="17.06" lengthAdjust="spacingAndGlyphs" font-weight="bold" >Red</text>
<rect x="823.4" y="1132.5" width="52.5" height="51" rx="3.5" fill="url(#swb)" stroke="#5a5a5a" stroke-width="0.6"/>
<rect x="827.4" y="1137.3" width="44.5" height="30.2" rx="3.5" fill="#603c72" stroke="#6e6e6e" stroke-width="0.8"/>
<text x="849.65" y="1180.00" font-size="10.50" fill="#2a2a2a" text-anchor="middle" textLength="28.10" lengthAdjust="spacingAndGlyphs" font-weight="bold" >Purple</text>
<rect x="878.2" y="1132.5" width="52.5" height="51" rx="3.5" fill="url(#swb)" stroke="#5a5a5a" stroke-width="0.6"/>
<rect x="882.2" y="1137.3" width="44.5" height="20" rx="3.5" fill="#a4c444" stroke="#6e6e6e" stroke-width="0.8"/>
<text x="890.11" y="1169.70" font-size="10.50" fill="#2a2a2a" textLength="28.60" lengthAdjust="spacingAndGlyphs" font-weight="bold" >Yellow</text>
<text x="890.11" y="1179.80" font-size="10.50" fill="#2a2a2a" textLength="26.10" lengthAdjust="spacingAndGlyphs" font-weight="bold" >Green</text>
<rect x="932.9" y="1132.5" width="52.5" height="51" rx="3.5" fill="url(#swb)" stroke="#5a5a5a" stroke-width="0.6"/>
<rect x="936.9" y="1137.3" width="44.5" height="20" rx="3.5" fill="#eca232" stroke="#6e6e6e" stroke-width="0.8"/>
<text x="943.36" y="1169.70" font-size="10.50" fill="#2a2a2a" textLength="31.61" lengthAdjust="spacingAndGlyphs" font-weight="bold" >Orange</text>
<text x="943.36" y="1179.80" font-size="10.50" fill="#2a2a2a" textLength="28.60" lengthAdjust="spacingAndGlyphs" font-weight="bold" >Yellow</text>
<rect x="987.7" y="1132.5" width="52.5" height="51" rx="3.5" fill="url(#swb)" stroke="#5a5a5a" stroke-width="0.6"/>
<rect x="991.7" y="1137.3" width="44.5" height="30.2" rx="3.5" fill="#3440a0" stroke="#6e6e6e" stroke-width="0.8"/>
<text x="1013.93" y="1180.00" font-size="10.50" fill="#2a2a2a" text-anchor="middle" textLength="19.57" lengthAdjust="spacingAndGlyphs" font-weight="bold" >Blue</text>
<rect x="1042.4" y="1132.5" width="52.5" height="51" rx="3.5" fill="url(#swb)" stroke="#5a5a5a" stroke-width="0.6"/>
<rect x="1046.4" y="1137.3" width="44.5" height="30.2" rx="3.5" fill="#469848" stroke="#6e6e6e" stroke-width="0.8"/>
<text x="1068.69" y="1180.00" font-size="10.50" fill="#2a2a2a" text-anchor="middle" textLength="26.10" lengthAdjust="spacingAndGlyphs" font-weight="bold" >Green</text>
<rect x="1097.2" y="1132.5" width="52.5" height="51" rx="3.5" fill="url(#swb)" stroke="#5a5a5a" stroke-width="0.6"/>
<rect x="1101.2" y="1137.3" width="44.5" height="30.2" rx="3.5" fill="#b83038" stroke="#6e6e6e" stroke-width="0.8"/>
<text x="1123.45" y="1180.00" font-size="10.50" fill="#2a2a2a" text-anchor="middle" textLength="17.06" lengthAdjust="spacingAndGlyphs" font-weight="bold" >Red</text>
<rect x="1152.0" y="1132.5" width="52.5" height="51" rx="3.5" fill="url(#swb)" stroke="#5a5a5a" stroke-width="0.6"/>
<rect x="1156.0" y="1137.3" width="44.5" height="30.2" rx="3.5" fill="#f0cc20" stroke="#6e6e6e" stroke-width="0.8"/>
<text x="1178.21" y="1180.00" font-size="10.50" fill="#2a2a2a" text-anchor="middle" textLength="28.60" lengthAdjust="spacingAndGlyphs" font-weight="bold" >Yellow</text>
<rect x="1206.7" y="1132.5" width="52.5" height="51" rx="3.5" fill="url(#swb)" stroke="#5a5a5a" stroke-width="0.6"/>
<rect x="1210.7" y="1137.3" width="44.5" height="30.2" rx="3.5" fill="#c8509e" stroke="#6e6e6e" stroke-width="0.8"/>
<text x="1232.97" y="1180.00" font-size="10.50" fill="#2a2a2a" text-anchor="middle" textLength="36.63" lengthAdjust="spacingAndGlyphs" font-weight="bold" >Magenta</text>
<rect x="1261.5" y="1132.5" width="52.5" height="51" rx="3.5" fill="url(#swb)" stroke="#5a5a5a" stroke-width="0.6"/>
<rect x="1265.5" y="1137.3" width="44.5" height="30.2" rx="3.5" fill="#0890b2" stroke="#6e6e6e" stroke-width="0.8"/>
<text x="1287.73" y="1180.00" font-size="10.50" fill="#2a2a2a" text-anchor="middle" textLength="22.08" lengthAdjust="spacingAndGlyphs" font-weight="bold" >Cyan</text>
<rect x="1316.2" y="1132.5" width="52.5" height="51" rx="3.5" fill="url(#swb)" stroke="#5a5a5a" stroke-width="0.6"/>
<rect x="1320.2" y="1137.3" width="44.5" height="30.2" rx="3.5" fill="#ff0000" stroke="#6e6e6e" stroke-width="0.8"/>
<text x="1342.49" y="1180.00" font-size="10.50" fill="#2a2a2a" text-anchor="middle" textLength="42.66" lengthAdjust="spacingAndGlyphs" font-weight="bold" >100% Red</text>
<rect x="1371.0" y="1132.5" width="52.5" height="51" rx="3.5" fill="url(#swb)" stroke="#5a5a5a" stroke-width="0.6"/>
<rect x="1375.0" y="1137.3" width="44.5" height="30.2" rx="3.5" fill="#00ff00" stroke="#6e6e6e" stroke-width="0.8"/>
<text x="1397.25" y="1180.00" font-size="10.50" fill="#2a2a2a" text-anchor="middle" textLength="50.00" lengthAdjust="spacingAndGlyphs" font-weight="bold" >100% Green</text>
<rect x="1425.8" y="1132.5" width="52.5" height="51" rx="3.5" fill="url(#swb)" stroke="#5a5a5a" stroke-width="0.6"/>
<rect x="1429.8" y="1137.3" width="44.5" height="30.2" rx="3.5" fill="#0000ff" stroke="#6e6e6e" stroke-width="0.8"/>
<text x="1452.01" y="1180.00" font-size="10.50" fill="#2a2a2a" text-anchor="middle" textLength="45.17" lengthAdjust="spacingAndGlyphs" font-weight="bold" >100% Blue</text>
<rect x="1480.5" y="1132.5" width="52.5" height="51" rx="3.5" fill="url(#swb)" stroke="#5a5a5a" stroke-width="0.6"/>
<rect x="1484.5" y="1137.3" width="44.5" height="30.2" rx="3.5" fill="#00ffff" stroke="#6e6e6e" stroke-width="0.8"/>
<text x="1506.77" y="1180.00" font-size="10.50" fill="#2a2a2a" text-anchor="middle" textLength="47.69" lengthAdjust="spacingAndGlyphs" font-weight="bold" >100% Cyan</text>
<rect x="1535.3" y="1132.5" width="52.5" height="51" rx="3.5" fill="url(#swb)" stroke="#5a5a5a" stroke-width="0.6"/>
<rect x="1539.3" y="1137.3" width="44.5" height="20" rx="3.5" fill="#ff00ff" stroke="#6e6e6e" stroke-width="0.8"/>
<text x="1543.22" y="1169.70" font-size="10.50" fill="#2a2a2a" textLength="23.10" lengthAdjust="spacingAndGlyphs" font-weight="bold" >100%</text>
<text x="1543.22" y="1179.80" font-size="10.50" fill="#2a2a2a" textLength="36.63" lengthAdjust="spacingAndGlyphs" font-weight="bold" >Magenta</text>
<rect x="1589.5" y="1132.5" width="54" height="51" rx="3" fill="#1e1e1e"/>
<rect x="1594.0" y="1137.3" width="44.5" height="30.2" rx="3.5" fill="#ffff00" stroke="#6e6e6e" stroke-width="0.8"/>
<text x="1616.29" y="1180.00" font-size="10.50" fill="#ffffff" text-anchor="middle" textLength="50.00" lengthAdjust="spacingAndGlyphs" font-weight="bold" >100% Yellow</text>
<rect x="1645.5" y="1133" width="40.5" height="15" rx="2" fill="url(#ctl)"/>
<circle cx="1666" cy="1140.5" r="6" fill="url(#ctlc)"/>
<path d="M1662 1142.5 L1666 1138 L1670 1142.5 Z" fill="#333"/>
<rect x="1645.5" y="1149" width="40.5" height="34.5" rx="2" fill="url(#ctl)"/>
<rect x="1653" y="1153.5" width="25" height="24.5" rx="3" fill="#d8d8d8" stroke="#1a1a1a" stroke-width="2"/>
<rect x="1658" y="1159" width="15" height="14" fill="#000"/>
<rect x="1687.0" y="1133" width="39.0" height="24.5" fill="url(#ctl)" stroke="#4a4a4a" stroke-width="0.6"/>
<circle cx="1706.5" cy="1145" r="8.5" fill="url(#ctlc)"/>
<rect x="1702.8" y="1141" width="7.5" height="7.5" fill="#2a2a2a"/>
<rect x="1726.0" y="1133" width="38.0" height="24.5" fill="url(#ctl)" stroke="#4a4a4a" stroke-width="0.6"/>
<circle cx="1745.0" cy="1145" r="8.5" fill="url(#ctlc)"/>
<path d="M1742.0 1140.5 L1750.0 1145.5 L1742.0 1150.5 Z" fill="#2a2a2a"/>
<rect x="1764.0" y="1133" width="38.0" height="24.5" fill="url(#ctl)" stroke="#4a4a4a" stroke-width="0.6"/>
<circle cx="1783.0" cy="1145" r="8.5" fill="url(#ctlc)"/>
<text x="1783.00" y="1149.50" font-size="11.00" fill="#2a2a2a" text-anchor="middle" textLength="13.00" lengthAdjust="spacingAndGlyphs" >[--]</text>
<rect x="1802.0" y="1133" width="38.0" height="24.5" fill="url(#ctl)" stroke="#4a4a4a" stroke-width="0.6"/>
<circle cx="1821.0" cy="1145" r="8.5" fill="url(#ctlc)"/>
<text x="1821.00" y="1151.00" font-size="16.00" fill="#2a2a2a" text-anchor="middle" font-weight="bold" >∞</text>
<rect x="1840.0" y="1133" width="38.0" height="24.5" fill="#3a3a3a" stroke="#4a4a4a" stroke-width="0.6"/>
<circle cx="1859.0" cy="1145" r="8" fill="#303030"/>
<path d="M1855.0 1141 a5 5 0 0 1 8 1.5 M1863.0 1149 a5 5 0 0 1 -8 -1.5" stroke="#1a1a1a" stroke-width="2.2" fill="none"/>
<rect x="1878.0" y="1133" width="40.0" height="24.5" fill="#3a3a3a" stroke="#4a4a4a" stroke-width="0.6"/>
<circle cx="1898.0" cy="1145" r="8" fill="#303030"/>
<rect x="1687.0" y="1158.5" width="115.0" height="25" rx="2" fill="url(#ctl)" stroke="#4a4a4a" stroke-width="0.6"/>
<circle cx="1712.8" cy="1171.4" r="8.5" fill="url(#ctlc)"/>
<text x="1712.80" y="1176.50" font-size="16.00" fill="#2a2a2a" text-anchor="middle" font-weight="bold" >«</text>
<text x="1735.80" y="1178.00" font-size="19.00" fill="#333333" textLength="42.50" lengthAdjust="spacingAndGlyphs" >Back</text>
<rect x="1802.0" y="1158.5" width="116.0" height="25" rx="2" fill="url(#ctl)" stroke="#4a4a4a" stroke-width="0.6"/>
<circle cx="1893.4" cy="1171.4" r="8.5" fill="url(#ctlc)"/>
<text x="1893.40" y="1176.50" font-size="16.00" fill="#2a2a2a" text-anchor="middle" font-weight="bold" >»</text>
<text x="1826.00" y="1178.00" font-size="19.00" fill="#333333" textLength="43.50" lengthAdjust="spacingAndGlyphs" >Next</text>
</svg>
<div style="position:absolute;left:1163px;top:139px;width:742px;height:631px;overflow:hidden">
<div style="position:absolute;left:0;top:0;width:742px;height:631px;clip-path:polygon(153.1px 628.4px, 153.1px 628.4px, 153.0px 628.5px, 153.0px 628.5px, 152.9px 628.5px, 152.8px 628.6px, 152.7px 628.6px, 152.6px 628.6px, 152.4px 628.6px, 152.3px 628.6px, 152.1px 628.6px, 151.9px 628.6px, 151.7px 628.6px, 151.5px 628.5px, 151.2px 628.5px, 151.0px 628.4px, 150.7px 628.4px, 150.5px 628.3px, 150.3px 628.1px, 150.0px 628.0px, 149.8px 627.9px, 149.5px 627.7px, 149.2px 627.5px, 148.9px 627.3px, 148.5px 627.0px, 148.1px 626.7px, 147.7px 626.4px, 147.3px 626.1px, 146.8px 625.7px, 146.3px 625.3px, 145.8px 624.9px, 145.2px 624.5px, 144.5px 624.0px, 143.8px 623.5px, 143.1px 623.0px, 142.4px 622.4px, 141.5px 621.8px, 140.7px 621.2px, 139.7px 620.5px, 138.7px 619.7px, 137.6px 618.9px, 136.5px 618.0px, 135.3px 617.2px, 134.1px 616.3px, 132.7px 615.4px, 131.3px 614.3px, 129.8px 613.0px, 128.2px 611.6px, 126.5px 609.8px, 124.6px 607.8px, 122.4px 605.4px, 120.1px 602.8px, 117.8px 600.1px, 115.4px 597.2px, 113.1px 594.3px, 110.9px 591.4px, 108.9px 588.7px, 107.1px 586.1px, 105.4px 583.6px, 103.8px 581.1px, 102.4px 578.6px, 100.9px 576.0px, 99.4px 573.2px, 97.8px 570.2px, 96.0px 566.8px, 94.2px 563.2px, 92.3px 559.5px, 90.4px 555.5px, 88.4px 551.4px, 86.3px 547.0px, 84.2px 542.4px, 82.1px 537.5px, 79.8px 532.3px, 77.5px 526.8px, 75.1px 521.1px, 72.6px 515.2px, 70.1px 509.0px, 67.5px 502.5px, 65.0px 495.7px, 62.4px 488.5px, 59.8px 481.1px, 57.3px 473.3px, 54.7px 465.1px, 52.1px 456.7px, 49.5px 447.9px, 46.9px 438.9px, 44.3px 429.5px, 41.7px 419.9px, 39.2px 410.1px, 36.7px 399.9px, 34.1px 389.3px, 31.6px 378.4px, 29.1px 367.2px, 26.6px 355.9px, 24.2px 344.4px, 21.9px 332.9px, 19.8px 321.4px, 17.8px 309.8px, 15.8px 298.0px, 13.9px 286.1px, 12.1px 274.0px, 10.4px 262.0px, 8.8px 250.1px, 7.4px 238.3px, 6.3px 226.8px, 5.2px 215.4px, 4.3px 204.0px, 3.6px 192.7px, 3.0px 181.5px, 2.5px 170.5px, 2.3px 159.8px, 2.3px 149.3px, 2.5px 139.1px, 2.9px 129.2px, 3.5px 119.5px, 4.3px 109.9px, 5.3px 100.6px, 6.5px 91.7px, 7.9px 83.1px, 9.5px 75.0px, 11.3px 67.3px, 13.4px 60.1px, 15.7px 53.2px, 18.2px 46.7px, 21.0px 40.6px, 23.9px 34.9px, 26.9px 29.7px, 30.1px 25.0px, 33.4px 20.8px, 36.9px 17.1px, 40.5px 14.0px, 44.3px 11.4px, 48.3px 9.3px, 52.3px 7.6px, 56.4px 6.2px, 60.6px 5.1px, 64.8px 4.3px, 69.0px 3.9px, 73.3px 4.0px, 77.7px 4.5px, 82.2px 5.2px, 86.6px 6.3px, 91.1px 7.4px, 95.6px 8.7px, 100.1px 10.1px, 104.6px 11.5px, 109.1px 13.1px, 113.6px 15.0px, 118.1px 16.9px, 122.6px 19.0px, 127.1px 21.1px, 131.6px 23.2px, 136.0px 25.4px, 140.3px 27.5px, 144.6px 29.7px, 148.8px 31.9px, 153.1px 34.2px, 157.3px 36.5px, 161.5px 38.9px, 165.6px 41.2px, 169.8px 43.7px, 173.9px 46.1px, 178.0px 48.6px, 182.1px 51.1px, 186.1px 53.7px, 190.2px 56.3px, 194.2px 58.9px, 198.2px 61.5px, 202.3px 64.2px, 206.3px 66.9px, 210.3px 69.7px, 214.3px 72.5px, 218.3px 75.3px, 222.3px 78.1px, 226.3px 81.0px, 230.3px 83.9px, 234.3px 86.8px, 238.3px 89.7px, 242.3px 92.7px, 246.2px 95.7px, 250.2px 98.7px, 254.1px 101.7px, 258.1px 104.8px, 262.1px 107.8px, 266.0px 110.9px, 270.0px 114.0px, 273.9px 117.1px, 277.9px 120.2px, 281.8px 123.4px, 285.8px 126.5px, 289.7px 129.7px, 293.7px 132.9px, 297.6px 136.0px, 301.6px 139.2px, 305.5px 142.5px, 309.5px 145.7px, 313.5px 148.9px, 317.4px 152.2px, 321.4px 155.4px, 325.4px 158.7px, 329.3px 162.0px, 333.3px 165.2px, 337.2px 168.5px, 341.1px 171.8px, 345.1px 175.1px, 349.0px 178.4px, 353.0px 181.7px, 356.9px 184.9px, 360.8px 188.2px, 364.8px 191.5px, 368.7px 194.8px, 372.6px 198.1px, 376.5px 201.4px, 380.5px 204.7px, 384.4px 208.0px, 388.3px 211.2px, 392.2px 214.5px, 396.0px 217.8px, 399.9px 221.0px, 403.8px 224.3px, 407.6px 227.6px, 411.5px 230.8px, 415.3px 234.0px, 419.1px 237.3px, 422.9px 240.5px, 426.7px 243.7px, 430.4px 246.9px, 434.2px 250.1px, 437.9px 253.2px, 441.7px 256.4px, 445.4px 259.6px, 449.1px 262.7px, 452.7px 265.8px, 456.4px 268.9px, 460.0px 272.0px, 463.6px 275.0px, 467.2px 278.1px, 470.8px 281.1px, 474.3px 284.1px, 477.8px 287.1px, 481.3px 290.0px, 484.8px 293.0px, 488.2px 295.9px, 491.6px 298.8px, 495.0px 301.6px, 498.4px 304.5px, 501.7px 307.3px, 505.0px 310.0px, 508.2px 312.8px, 511.4px 315.5px, 514.6px 318.2px, 517.7px 320.9px, 520.8px 323.5px, 523.9px 326.1px, 526.9px 328.7px, 529.9px 331.2px, 532.7px 333.6px, 535.6px 336.0px, 538.4px 338.4px, 541.1px 340.7px, 543.8px 343.0px, 546.4px 345.2px, 549.0px 347.4px, 551.6px 349.6px, 554.1px 351.7px, 556.6px 353.8px, 559.0px 355.9px, 561.4px 357.9px, 563.8px 360.0px, 566.2px 361.9px, 568.4px 363.9px, 570.7px 365.8px, 572.9px 367.6px, 575.0px 369.4px, 577.0px 371.1px, 579.1px 372.8px, 581.0px 374.5px, 582.9px 376.1px, 584.8px 377.7px, 586.6px 379.2px, 588.4px 380.7px, 590.2px 382.2px, 591.9px 383.6px, 593.5px 385.0px, 595.1px 386.4px, 596.7px 387.7px, 598.2px 389.0px, 599.7px 390.2px, 601.1px 391.5px, 602.5px 392.7px, 603.8px 393.8px, 605.2px 394.9px, 606.4px 396.0px, 607.7px 397.1px, 608.9px 398.1px, 610.0px 399.1px, 611.2px 400.1px, 612.3px 401.0px, 613.4px 401.9px, 614.4px 402.8px, 615.4px 403.6px, 616.4px 404.5px, 617.4px 405.3px, 618.3px 406.1px, 619.2px 406.8px, 620.1px 407.6px, 621.0px 408.3px, 621.8px 409.0px, 622.6px 409.7px, 623.4px 410.4px, 624.2px 411.0px, 625.0px 411.7px, 625.7px 412.3px, 626.4px 412.9px, 627.2px 413.6px, 627.8px 414.1px, 628.5px 414.7px, 629.2px 415.3px, 629.8px 415.8px, 630.5px 416.4px, 631.1px 416.9px, 631.7px 417.4px, 632.3px 417.9px, 632.9px 418.4px, 633.4px 418.9px, 634.0px 419.4px, 634.5px 419.8px, 635.0px 420.3px, 635.5px 420.7px, 636.0px 421.1px, 636.5px 421.5px, 637.0px 421.9px, 637.4px 422.2px, 637.8px 422.6px, 638.3px 423.0px, 638.7px 423.3px, 639.1px 423.6px, 639.5px 423.9px, 639.8px 424.2px, 640.2px 424.5px, 640.5px 424.8px, 640.8px 425.1px, 641.1px 425.4px, 641.4px 425.6px, 641.7px 425.9px, 642.0px 426.1px, 642.3px 426.4px, 642.6px 426.6px, 642.8px 426.8px, 643.1px 427.0px, 643.3px 427.2px, 643.5px 427.4px, 643.8px 427.6px, 644.0px 427.8px, 644.2px 428.0px, 644.4px 428.1px, 644.5px 428.3px, 644.7px 428.4px, 644.9px 428.6px, 645.1px 428.7px, 645.3px 428.9px, 645.5px 429.1px, 645.7px 429.3px, 645.9px 429.5px, 646.2px 429.7px, 646.4px 429.9px, 646.6px 430.0px, 646.8px 430.2px, 647.0px 430.4px, 647.2px 430.5px, 647.4px 430.7px, 647.5px 430.8px, 647.7px 431.0px, 647.8px 431.1px, 648.0px 431.2px, 648.1px 431.3px, 648.3px 431.5px, 648.4px 431.6px, 648.6px 431.7px, 648.8px 431.9px, 648.9px 432.0px, 649.1px 432.1px, 649.2px 432.3px, 649.3px 432.4px, 649.4px 432.4px)">
<div style="position:absolute;left:0;top:0;width:742px;height:631px;background:conic-gradient(from 0deg at 275.8px 384.5px, #0c9600 0deg, #5a9000 25deg, #8a8a00 38deg, #9a5a00 62deg, #a00000 90deg, #a00030 130deg, #900070 170deg, #4000a0 200deg, #0000a8 222deg, #0008a0 240deg, #0040a0 254deg, #00789a 262deg, #00948c 271deg, #009a50 286deg, #009a10 300deg, #0c9800 360deg)"></div>
<div style="position:absolute;left:0;top:0;width:742px;height:631px;clip-path:polygon(0px 0px, 264.6px 0px, 264.6px 180.4px, 131.8px 587.0px, 153.1px 630.4px, 153.1px 631px, 0px 631px);background:linear-gradient(to bottom, #0a9a00 0px, #009a18 240px, #009868 325px, #00928a 383px, #0068a0 416px, #0038a0 461px, #0018a2 511px, #0008a8 578px, #0004a8 631px)"></div>
</div>
<div style="position:absolute;left:0;top:0;width:742px;height:631px;clip-path:polygon(565.6px 383.7px, 264.6px 180.4px, 131.8px 587.0px);background:radial-gradient(circle at 275.8px 384.5px, rgba(255,255,255,1) 0px, rgba(255,255,255,0.85) 18px, rgba(255,255,255,0.45) 60px, rgba(255,255,255,0.15) 120px, rgba(255,255,255,0) 180px), conic-gradient(from 0deg at 275.8px 384.5px, #10ff00 0deg, #ffff00 35.5deg, #ff0000 89.8deg, #ff00ff 176.8deg, #0000ff 215.5deg, #00ffff 270deg, #00ff00 356.8deg, #10ff00 360deg)"></div>
</div>
<div style="position:absolute;left:1647.5px;top:146.5px;width:252.5px;height:239.5px;background:#1e1e1e"></div>
<div style="position:absolute;left:1649.5px;top:148.5px;width:248.5px;height:235.5px;overflow:hidden;background:linear-gradient(125deg,#4a9a08 0%,#7a9600 30%,#8e9200 50%,#9a7400 75%,#9a5c00 100%)">
<div style="position:absolute;left:0;top:0;width:100%;height:100%;clip-path:polygon(0px 24.2px, 248.5px 210.5px, 248.5px 235.5px, 0px 235.5px);background:linear-gradient(120deg,#80ff00 0%,#c0ff10 28%,#ffff20 50%,#ffc800 72%,#ff9000 100%)"></div>
<div style="position:absolute;left:0;top:0;width:100%;height:100%;clip-path:polygon(216px 0px, 248.5px 0px, 248.5px 30.5px);background:#232323"></div>
</div>
<svg width="1920" height="1186" viewBox="0 0 1920 1186" style="pointer-events:none">
<rect x="1162" y="138" width="744" height="633" fill="none" stroke="#a8a8a8" stroke-width="1.5"/>
<rect x="1431.6" y="516.0" width="15" height="15" fill="none" stroke="#000" stroke-width="2.6"/>
<rect x="1433.6" y="518.0" width="11" height="11" fill="none" stroke="#fff" stroke-width="1.5"/>
<rect x="1508.6" y="489.6" width="15" height="15" fill="none" stroke="#fff" stroke-width="1.9"/>
<rect x="1490.9" y="495.6" width="15" height="15" fill="none" stroke="#fff" stroke-width="1.9"/>
<rect x="1375.8" y="563.4" width="15" height="15" fill="none" stroke="#fff" stroke-width="1.9"/>
<rect x="1455.5" y="442.2" width="15" height="15" fill="none" stroke="#fff" stroke-width="1.9"/>
<rect x="1391.8" y="573.2" width="15" height="15" fill="none" stroke="#fff" stroke-width="1.9"/>
<rect x="1387.3" y="491.1" width="15" height="15" fill="none" stroke="#fff" stroke-width="1.9"/>
<rect x="1607.8" y="458.0" width="15" height="15" fill="none" stroke="#fff" stroke-width="1.9"/>
<rect x="1346.6" y="619.1" width="15" height="15" fill="none" stroke="#fff" stroke-width="1.9"/>
<rect x="1563.5" y="528.0" width="15" height="15" fill="none" stroke="#fff" stroke-width="1.9"/>
<rect x="1411.2" y="597.3" width="15" height="15" fill="none" stroke="#fff" stroke-width="1.9"/>
<rect x="1487.4" y="392.5" width="15" height="15" fill="none" stroke="#fff" stroke-width="1.9"/>
<rect x="1574.1" y="433.1" width="15" height="15" fill="none" stroke="#fff" stroke-width="1.9"/>
<rect x="1324.5" y="657.5" width="15" height="15" fill="none" stroke="#fff" stroke-width="1.9"/>
<rect x="1424.5" y="395.5" width="15" height="15" fill="none" stroke="#fff" stroke-width="1.9"/>
<rect x="1629.9" y="525.0" width="15" height="15" fill="none" stroke="#fff" stroke-width="1.9"/>
<rect x="1550.2" y="406.8" width="15" height="15" fill="none" stroke="#fff" stroke-width="1.9"/>
<rect x="1485.6" y="577.7" width="15" height="15" fill="none" stroke="#fff" stroke-width="1.9"/>
<rect x="1338.6" y="560.4" width="15" height="15" fill="none" stroke="#fff" stroke-width="1.9"/>
<rect x="1721.1" y="515.2" width="15" height="15" fill="none" stroke="#fff" stroke-width="1.9"/>
<rect x="1420.1" y="311.9" width="15" height="15" fill="none" stroke="#fff" stroke-width="1.9"/>
<rect x="1287.3" y="718.5" width="15" height="15" fill="none" stroke="#fff" stroke-width="1.9"/>
<rect x="1353.7" y="516.0" width="15" height="15" fill="none" stroke="#fff" stroke-width="1.9"/>
<rect x="1438.7" y="647.7" width="15" height="15" fill="none" stroke="#fff" stroke-width="1.9"/>
<rect x="1525.4" y="383.4" width="15" height="15" fill="none" stroke="#fff" stroke-width="1.9"/>
<circle cx="1425.8" cy="538.5" r="4.8" fill="#e8e8e8" stroke="#101010" stroke-width="1.4"/>
<circle cx="1425.8" cy="538.5" r="4.8" fill="#d0d0d0" stroke="#101010" stroke-width="1.4"/>
<circle cx="1425.8" cy="537.8" r="4.8" fill="#b8b8b8" stroke="#101010" stroke-width="1.4"/>
<circle cx="1425.8" cy="537.8" r="4.8" fill="#a0a0a0" stroke="#101010" stroke-width="1.4"/>
<circle cx="1425.8" cy="537.8" r="4.8" fill="#909090" stroke="#101010" stroke-width="1.4"/>
<circle cx="1507.3" cy="537.8" r="4.8" fill="#000000" stroke="#101010" stroke-width="1.4"/>
<circle cx="1521.4" cy="500.9" r="4.8" fill="#7a5444" stroke="#101010" stroke-width="1.4"/>
<circle cx="1506.4" cy="509.2" r="4.8" fill="#c49a86" stroke="#101010" stroke-width="1.4"/>
<circle cx="1358.5" cy="598.0" r="4.8" fill="#6a82a8" stroke="#101010" stroke-width="1.4"/>
<circle cx="1451.5" cy="443.6" r="4.8" fill="#566a44" stroke="#101010" stroke-width="1.4"/>
<circle cx="1379.8" cy="610.1" r="4.8" fill="#8a84b4" stroke="#101010" stroke-width="1.4"/>
<circle cx="1358.5" cy="507.7" r="4.8" fill="#70b4a4" stroke="#101010" stroke-width="1.4"/>
<circle cx="1655.1" cy="465.5" r="4.8" fill="#e07e30" stroke="#101010" stroke-width="1.4"/>
<circle cx="1334.6" cy="654.5" r="4.8" fill="#5060a6" stroke="#101010" stroke-width="1.4"/>
<circle cx="1590.5" cy="537.8" r="4.8" fill="#c06070" stroke="#101010" stroke-width="1.4"/>
<circle cx="1414.3" cy="621.4" r="4.8" fill="#5e3c6c" stroke="#101010" stroke-width="1.4"/>
<circle cx="1486.0" cy="370.6" r="4.8" fill="#9cba60" stroke="#101010" stroke-width="1.4"/>
<circle cx="1616.2" cy="436.1" r="4.8" fill="#e8b040" stroke="#101010" stroke-width="1.4"/>
<circle cx="1316.9" cy="690.6" r="4.8" fill="#3a42a0" stroke="#101010" stroke-width="1.4"/>
<circle cx="1393.9" cy="373.6" r="4.8" fill="#4e8a52" stroke="#101010" stroke-width="1.4"/>
<circle cx="1664.9" cy="528.0" r="4.8" fill="#b84450" stroke="#101010" stroke-width="1.4"/>
<circle cx="1581.6" cy="399.2" r="4.8" fill="#f0cc3a" stroke="#101010" stroke-width="1.4"/>
<circle cx="1502.8" cy="593.5" r="4.8" fill="#c0609e" stroke="#101010" stroke-width="1.4"/>
<circle cx="1310.7" cy="601.8" r="4.8" fill="#108ea6" stroke="#101010" stroke-width="1.4"/>
<circle cx="1744.5" cy="513.7" r="4.8" fill="#ff0000" stroke="#101010" stroke-width="1.4"/>
<circle cx="1364.7" cy="233.6" r="4.8" fill="#00ff00" stroke="#101010" stroke-width="1.4"/>
<circle cx="1289.5" cy="739.6" r="4.8" fill="#0000ff" stroke="#101010" stroke-width="1.4"/>
<circle cx="1318.7" cy="542.3" r="4.8" fill="#00ffff" stroke="#101010" stroke-width="1.4"/>
<circle cx="1451.5" cy="659.8" r="4.8" fill="#ff00ff" stroke="#101010" stroke-width="1.4"/>
<circle cx="1539.1" cy="361.6" r="4.8" fill="#ffff00" stroke="#101010" stroke-width="1.4"/>
<rect x="1648.5" y="147.5" width="250.5" height="237.5" fill="none" stroke="#9a9a9a" stroke-width="1.6"/>
<circle cx="1792.2" cy="160" r="5.2" fill="#ffff00" stroke="#101010" stroke-width="1.3"/>
<rect x="1764" y="256.8" width="16" height="16" fill="none" stroke="#fff" stroke-width="2"/>
<rect x="1843.8" y="342.8" width="16" height="16" fill="none" stroke="#fff" stroke-width="2"/>
<path d="M1649.5 290.5 H1655.5 V306.5 H1649.5" fill="none" stroke="#fff" stroke-width="2"/>
<rect x="1613" y="730" width="289.5" height="34.6" fill="#333333"/>
<text x="1614.00" y="757.00" font-size="25.00" fill="#f4f4f4" textLength="241.60" lengthAdjust="spacingAndGlyphs" stroke="#f4f4f4" stroke-width="0.5">RGB Triplet: 255, 255, 0</text>
</svg>
</body></html>
